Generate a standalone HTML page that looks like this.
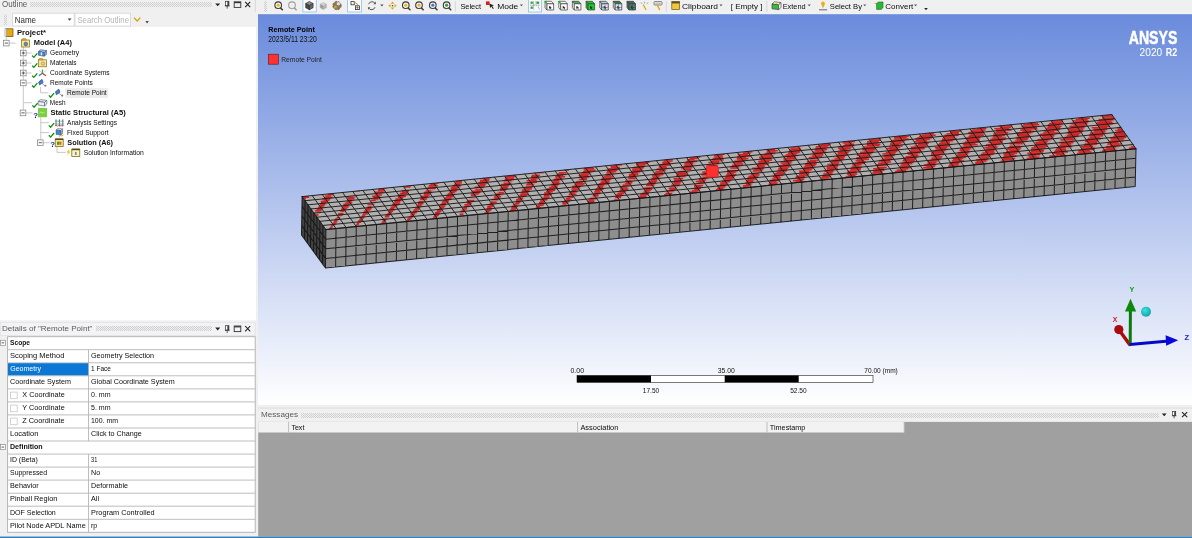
<!DOCTYPE html>
<html><head><meta charset="utf-8"><title>Mechanical</title>
<style>html,body{margin:0;padding:0;background:#f0f0f0;overflow:hidden}svg{display:block;will-change:transform}</style>
</head><body>
<svg width="1192" height="538" viewBox="0 0 1192 538" font-family="Liberation Sans, sans-serif" shape-rendering="auto">
<defs>
<linearGradient id="bg" x1="0" y1="0" x2="0" y2="1"><stop offset="0" stop-color="#6a8bdc"/><stop offset="1" stop-color="#ffffff"/></linearGradient>
<pattern id="dots" width="2" height="2" patternUnits="userSpaceOnUse"><rect width="2" height="2" fill="#f0f0f0"/><rect width="1" height="1" fill="#cfcfcf"/><rect x="1" y="1" width="1" height="1" fill="#cfcfcf"/></pattern>
</defs>
<rect width="1192" height="538" fill="#f0f0f0"/>
<rect x="258" y="14.2" width="934" height="390.8" fill="url(#bg)"/>
<g id="beam">
<polygon points="302.10,196.60 1111.80,114.50 1136.00,148.80 325.90,229.60" fill="#b1b1b1"/>
<polygon points="325.90,229.60 1136.00,148.80 1135.20,186.40 325.50,268.00" fill="#8e8e8e"/>
<polygon points="302.10,196.60 325.90,229.60 325.50,268.00 301.50,235.00" fill="#414141"/>
<clipPath id="topclip"><polygon points="302.10,196.60 1111.80,114.50 1136.00,148.80 325.90,229.60"/></clipPath>
<g clip-path="url(#topclip)">
<polygon points="277.3,234.3 279.7,234.3 306.5,199.9 298.3,199.9" fill="#cd2323" fill-opacity="0.22"/>
<rect x="275.5" y="235.7" width="2.0" height="1.50" fill="#cd2323"/>
<rect x="276.1" y="234.3" width="2.1" height="1.50" fill="#cd2323"/>
<rect x="278.2" y="231.6" width="1.9" height="1.50" fill="#cd2323"/>
<rect x="279.4" y="230.3" width="2.3" height="1.50" fill="#cd2323"/>
<rect x="279.6" y="228.9" width="2.8" height="1.50" fill="#cd2323"/>
<rect x="280.6" y="227.6" width="3.3" height="1.50" fill="#cd2323"/>
<rect x="281.1" y="226.2" width="3.2" height="1.50" fill="#cd2323"/>
<rect x="282.2" y="224.9" width="3.3" height="1.50" fill="#cd2323"/>
<rect x="284.5" y="222.2" width="3.5" height="1.50" fill="#cd2323"/>
<rect x="285.4" y="220.8" width="4.2" height="1.50" fill="#cd2323"/>
<rect x="285.5" y="219.5" width="4.6" height="1.50" fill="#cd2323"/>
<rect x="285.7" y="218.1" width="5.0" height="1.50" fill="#cd2323"/>
<rect x="288.6" y="216.8" width="3.6" height="1.50" fill="#cd2323"/>
<rect x="287.9" y="215.4" width="4.8" height="1.50" fill="#cd2323"/>
<rect x="289.2" y="214.1" width="4.4" height="1.50" fill="#cd2323"/>
<rect x="290.7" y="212.7" width="5.1" height="1.50" fill="#cd2323"/>
<rect x="291.0" y="211.4" width="6.3" height="1.50" fill="#cd2323"/>
<rect x="290.9" y="210.0" width="5.8" height="1.50" fill="#cd2323"/>
<rect x="292.7" y="208.7" width="6.9" height="1.50" fill="#cd2323"/>
<rect x="292.6" y="207.3" width="6.3" height="1.50" fill="#cd2323"/>
<rect x="293.8" y="206.0" width="6.1" height="1.50" fill="#cd2323"/>
<rect x="294.3" y="203.3" width="7.9" height="1.50" fill="#cd2323"/>
<rect x="296.2" y="201.9" width="6.1" height="1.50" fill="#cd2323"/>
<rect x="298.1" y="200.6" width="7.6" height="1.50" fill="#cd2323"/>
<rect x="300.9" y="197.9" width="5.1" height="1.50" fill="#cd2323"/>
<rect x="300.8" y="196.5" width="8.3" height="1.50" fill="#cd2323"/>
<rect x="299.9" y="195.2" width="8.7" height="1.50" fill="#cd2323"/>
<polygon points="303.2,231.7 305.6,231.7 332.5,197.3 324.3,197.3" fill="#cd2323" fill-opacity="0.22"/>
<rect x="302.5" y="231.7" width="1.5" height="1.50" fill="#cd2323"/>
<rect x="303.1" y="230.4" width="2.1" height="1.50" fill="#cd2323"/>
<rect x="305.6" y="227.7" width="2.1" height="1.50" fill="#cd2323"/>
<rect x="306.0" y="226.3" width="2.4" height="1.50" fill="#cd2323"/>
<rect x="306.8" y="225.0" width="3.0" height="1.50" fill="#cd2323"/>
<rect x="308.0" y="223.6" width="3.2" height="1.50" fill="#cd2323"/>
<rect x="308.8" y="222.3" width="3.0" height="1.50" fill="#cd2323"/>
<rect x="310.1" y="220.9" width="3.0" height="1.50" fill="#cd2323"/>
<rect x="309.5" y="219.6" width="3.6" height="1.50" fill="#cd2323"/>
<rect x="310.3" y="218.2" width="3.9" height="1.50" fill="#cd2323"/>
<rect x="311.1" y="216.9" width="4.2" height="1.50" fill="#cd2323"/>
<rect x="313.0" y="215.5" width="4.0" height="1.50" fill="#cd2323"/>
<rect x="313.7" y="214.2" width="4.8" height="1.50" fill="#cd2323"/>
<rect x="315.0" y="210.1" width="6.1" height="1.50" fill="#cd2323"/>
<rect x="316.5" y="208.8" width="5.3" height="1.50" fill="#cd2323"/>
<rect x="317.8" y="207.4" width="4.7" height="1.50" fill="#cd2323"/>
<rect x="318.7" y="206.1" width="4.8" height="1.50" fill="#cd2323"/>
<rect x="320.3" y="204.7" width="4.1" height="1.50" fill="#cd2323"/>
<rect x="320.0" y="203.4" width="5.2" height="1.50" fill="#cd2323"/>
<rect x="320.9" y="202.0" width="5.1" height="1.50" fill="#cd2323"/>
<rect x="320.8" y="200.7" width="6.9" height="1.50" fill="#cd2323"/>
<rect x="323.9" y="199.3" width="5.8" height="1.50" fill="#cd2323"/>
<rect x="322.2" y="198.0" width="7.9" height="1.50" fill="#cd2323"/>
<rect x="325.1" y="196.6" width="7.4" height="1.50" fill="#cd2323"/>
<rect x="325.1" y="195.3" width="5.8" height="1.50" fill="#cd2323"/>
<rect x="327.7" y="193.9" width="5.6" height="1.50" fill="#cd2323"/>
<rect x="327.4" y="192.6" width="5.6" height="1.50" fill="#cd2323"/>
<polygon points="329.2,229.2 331.6,229.2 358.5,194.7 350.3,194.7" fill="#cd2323" fill-opacity="0.22"/>
<rect x="327.6" y="230.5" width="2.2" height="1.50" fill="#cd2323"/>
<rect x="328.5" y="229.2" width="1.6" height="1.50" fill="#cd2323"/>
<rect x="329.4" y="227.8" width="1.8" height="1.50" fill="#cd2323"/>
<rect x="330.2" y="226.5" width="2.2" height="1.50" fill="#cd2323"/>
<rect x="330.9" y="225.1" width="2.0" height="1.50" fill="#cd2323"/>
<rect x="332.1" y="223.8" width="3.2" height="1.50" fill="#cd2323"/>
<rect x="332.8" y="222.4" width="3.5" height="1.50" fill="#cd2323"/>
<rect x="333.7" y="221.1" width="3.4" height="1.50" fill="#cd2323"/>
<rect x="334.2" y="219.7" width="3.2" height="1.50" fill="#cd2323"/>
<rect x="335.0" y="218.4" width="2.9" height="1.50" fill="#cd2323"/>
<rect x="336.7" y="217.0" width="3.2" height="1.50" fill="#cd2323"/>
<rect x="338.2" y="214.3" width="4.4" height="1.50" fill="#cd2323"/>
<rect x="338.3" y="213.0" width="5.1" height="1.50" fill="#cd2323"/>
<rect x="340.4" y="210.3" width="3.7" height="1.50" fill="#cd2323"/>
<rect x="341.0" y="208.9" width="4.8" height="1.50" fill="#cd2323"/>
<rect x="341.6" y="207.6" width="5.2" height="1.50" fill="#cd2323"/>
<rect x="342.3" y="206.2" width="6.2" height="1.50" fill="#cd2323"/>
<rect x="343.4" y="204.9" width="4.9" height="1.50" fill="#cd2323"/>
<rect x="343.4" y="203.5" width="6.5" height="1.50" fill="#cd2323"/>
<rect x="345.3" y="202.2" width="7.0" height="1.50" fill="#cd2323"/>
<rect x="347.3" y="200.8" width="4.3" height="1.50" fill="#cd2323"/>
<rect x="347.4" y="199.5" width="4.5" height="1.50" fill="#cd2323"/>
<rect x="347.7" y="198.1" width="6.4" height="1.50" fill="#cd2323"/>
<rect x="347.1" y="196.8" width="7.5" height="1.50" fill="#cd2323"/>
<rect x="351.6" y="190.0" width="8.2" height="1.50" fill="#cd2323"/>
<polygon points="354.9,226.6 357.8,226.6 384.6,192.1 376.1,192.1" fill="#cd2323" fill-opacity="0.22"/>
<rect x="353.3" y="227.9" width="2.1" height="1.50" fill="#cd2323"/>
<rect x="354.2" y="226.6" width="2.6" height="1.50" fill="#cd2323"/>
<rect x="355.2" y="225.2" width="2.0" height="1.50" fill="#cd2323"/>
<rect x="356.2" y="223.9" width="2.6" height="1.50" fill="#cd2323"/>
<rect x="356.9" y="222.5" width="2.1" height="1.50" fill="#cd2323"/>
<rect x="357.9" y="221.2" width="3.1" height="1.50" fill="#cd2323"/>
<rect x="358.4" y="219.8" width="3.6" height="1.50" fill="#cd2323"/>
<rect x="359.5" y="218.5" width="3.1" height="1.50" fill="#cd2323"/>
<rect x="360.6" y="217.1" width="3.3" height="1.50" fill="#cd2323"/>
<rect x="361.4" y="215.8" width="3.2" height="1.50" fill="#cd2323"/>
<rect x="362.3" y="214.4" width="2.9" height="1.50" fill="#cd2323"/>
<rect x="363.0" y="213.1" width="4.9" height="1.50" fill="#cd2323"/>
<rect x="363.6" y="211.7" width="5.2" height="1.50" fill="#cd2323"/>
<rect x="363.9" y="210.4" width="4.3" height="1.50" fill="#cd2323"/>
<rect x="365.7" y="209.0" width="5.0" height="1.50" fill="#cd2323"/>
<rect x="366.3" y="207.7" width="5.3" height="1.50" fill="#cd2323"/>
<rect x="367.7" y="206.3" width="3.9" height="1.50" fill="#cd2323"/>
<rect x="367.4" y="203.6" width="6.2" height="1.50" fill="#cd2323"/>
<rect x="370.8" y="199.6" width="4.9" height="1.50" fill="#cd2323"/>
<rect x="373.5" y="198.2" width="4.8" height="1.50" fill="#cd2323"/>
<rect x="373.3" y="196.9" width="7.5" height="1.50" fill="#cd2323"/>
<rect x="372.2" y="195.5" width="7.6" height="1.50" fill="#cd2323"/>
<rect x="375.1" y="194.2" width="6.7" height="1.50" fill="#cd2323"/>
<rect x="374.4" y="191.5" width="8.8" height="1.50" fill="#cd2323"/>
<rect x="377.9" y="190.1" width="7.3" height="1.50" fill="#cd2323"/>
<rect x="378.2" y="188.8" width="5.8" height="1.50" fill="#cd2323"/>
<rect x="378.3" y="187.4" width="8.1" height="1.50" fill="#cd2323"/>
<polygon points="380.7,224.0 383.9,224.0 410.7,189.5 401.9,189.5" fill="#cd2323" fill-opacity="0.22"/>
<rect x="379.1" y="225.3" width="2.5" height="1.50" fill="#cd2323"/>
<rect x="380.4" y="224.0" width="2.0" height="1.50" fill="#cd2323"/>
<rect x="381.3" y="222.6" width="2.5" height="1.50" fill="#cd2323"/>
<rect x="382.0" y="221.3" width="3.2" height="1.50" fill="#cd2323"/>
<rect x="382.7" y="219.9" width="3.1" height="1.50" fill="#cd2323"/>
<rect x="382.8" y="218.6" width="3.9" height="1.50" fill="#cd2323"/>
<rect x="384.8" y="215.9" width="4.4" height="1.50" fill="#cd2323"/>
<rect x="385.4" y="214.5" width="4.2" height="1.50" fill="#cd2323"/>
<rect x="387.4" y="213.2" width="3.3" height="1.50" fill="#cd2323"/>
<rect x="388.4" y="211.8" width="3.5" height="1.50" fill="#cd2323"/>
<rect x="389.2" y="210.5" width="3.8" height="1.50" fill="#cd2323"/>
<rect x="389.2" y="209.1" width="5.4" height="1.50" fill="#cd2323"/>
<rect x="389.9" y="207.8" width="4.0" height="1.50" fill="#cd2323"/>
<rect x="390.8" y="206.4" width="4.6" height="1.50" fill="#cd2323"/>
<rect x="392.7" y="205.1" width="4.6" height="1.50" fill="#cd2323"/>
<rect x="392.1" y="203.7" width="6.7" height="1.50" fill="#cd2323"/>
<rect x="394.4" y="202.4" width="5.4" height="1.50" fill="#cd2323"/>
<rect x="394.4" y="201.0" width="5.8" height="1.50" fill="#cd2323"/>
<rect x="394.6" y="199.7" width="7.0" height="1.50" fill="#cd2323"/>
<rect x="395.4" y="198.3" width="7.6" height="1.50" fill="#cd2323"/>
<rect x="398.0" y="197.0" width="5.3" height="1.50" fill="#cd2323"/>
<rect x="397.9" y="195.6" width="8.0" height="1.50" fill="#cd2323"/>
<rect x="398.8" y="194.3" width="5.4" height="1.50" fill="#cd2323"/>
<rect x="400.1" y="192.9" width="7.5" height="1.50" fill="#cd2323"/>
<rect x="401.8" y="191.6" width="6.0" height="1.50" fill="#cd2323"/>
<rect x="402.0" y="190.2" width="6.8" height="1.50" fill="#cd2323"/>
<rect x="404.1" y="186.2" width="6.5" height="1.50" fill="#cd2323"/>
<rect x="403.3" y="184.8" width="8.0" height="1.50" fill="#cd2323"/>
<polygon points="406.5,221.4 410.1,221.4 436.8,186.9 427.8,186.9" fill="#cd2323" fill-opacity="0.22"/>
<rect x="405.0" y="222.7" width="2.9" height="1.50" fill="#cd2323"/>
<rect x="406.3" y="221.4" width="3.1" height="1.50" fill="#cd2323"/>
<rect x="406.4" y="220.0" width="3.0" height="1.50" fill="#cd2323"/>
<rect x="407.1" y="218.7" width="3.5" height="1.50" fill="#cd2323"/>
<rect x="407.7" y="217.3" width="4.1" height="1.50" fill="#cd2323"/>
<rect x="409.8" y="216.0" width="3.3" height="1.50" fill="#cd2323"/>
<rect x="410.7" y="214.6" width="3.3" height="1.50" fill="#cd2323"/>
<rect x="410.4" y="213.3" width="4.6" height="1.50" fill="#cd2323"/>
<rect x="411.6" y="211.9" width="5.1" height="1.50" fill="#cd2323"/>
<rect x="413.2" y="210.6" width="3.3" height="1.50" fill="#cd2323"/>
<rect x="413.6" y="209.2" width="5.0" height="1.50" fill="#cd2323"/>
<rect x="415.1" y="207.9" width="3.8" height="1.50" fill="#cd2323"/>
<rect x="416.4" y="206.5" width="3.9" height="1.50" fill="#cd2323"/>
<rect x="417.4" y="205.2" width="3.9" height="1.50" fill="#cd2323"/>
<rect x="417.6" y="203.8" width="4.7" height="1.50" fill="#cd2323"/>
<rect x="418.0" y="202.5" width="5.5" height="1.50" fill="#cd2323"/>
<rect x="418.4" y="201.1" width="4.9" height="1.50" fill="#cd2323"/>
<rect x="420.1" y="198.4" width="6.7" height="1.50" fill="#cd2323"/>
<rect x="421.0" y="197.1" width="5.6" height="1.50" fill="#cd2323"/>
<rect x="420.4" y="195.7" width="7.6" height="1.50" fill="#cd2323"/>
<rect x="424.0" y="194.4" width="5.5" height="1.50" fill="#cd2323"/>
<rect x="423.9" y="193.0" width="6.0" height="1.50" fill="#cd2323"/>
<rect x="423.8" y="191.7" width="7.8" height="1.50" fill="#cd2323"/>
<rect x="425.7" y="190.3" width="5.5" height="1.50" fill="#cd2323"/>
<rect x="427.2" y="187.6" width="8.5" height="1.50" fill="#cd2323"/>
<rect x="428.4" y="186.3" width="6.2" height="1.50" fill="#cd2323"/>
<rect x="428.9" y="184.9" width="8.9" height="1.50" fill="#cd2323"/>
<rect x="430.4" y="183.6" width="6.0" height="1.50" fill="#cd2323"/>
<rect x="430.9" y="182.2" width="7.7" height="1.50" fill="#cd2323"/>
<polygon points="432.3,218.8 436.2,218.8 462.9,184.3 453.6,184.3" fill="#cd2323" fill-opacity="0.22"/>
<rect x="431.3" y="220.1" width="2.8" height="1.50" fill="#cd2323"/>
<rect x="432.8" y="217.4" width="4.0" height="1.50" fill="#cd2323"/>
<rect x="433.5" y="216.1" width="3.6" height="1.50" fill="#cd2323"/>
<rect x="434.1" y="214.7" width="4.6" height="1.50" fill="#cd2323"/>
<rect x="434.8" y="213.4" width="4.6" height="1.50" fill="#cd2323"/>
<rect x="435.1" y="212.0" width="4.5" height="1.50" fill="#cd2323"/>
<rect x="436.7" y="210.7" width="4.6" height="1.50" fill="#cd2323"/>
<rect x="437.3" y="209.3" width="4.3" height="1.50" fill="#cd2323"/>
<rect x="439.2" y="208.0" width="3.4" height="1.50" fill="#cd2323"/>
<rect x="439.6" y="206.6" width="4.6" height="1.50" fill="#cd2323"/>
<rect x="439.1" y="205.3" width="6.0" height="1.50" fill="#cd2323"/>
<rect x="440.2" y="203.9" width="5.4" height="1.50" fill="#cd2323"/>
<rect x="441.6" y="202.6" width="4.5" height="1.50" fill="#cd2323"/>
<rect x="441.8" y="201.2" width="6.7" height="1.50" fill="#cd2323"/>
<rect x="442.7" y="199.9" width="6.2" height="1.50" fill="#cd2323"/>
<rect x="445.2" y="198.5" width="6.1" height="1.50" fill="#cd2323"/>
<rect x="444.6" y="197.2" width="6.8" height="1.50" fill="#cd2323"/>
<rect x="446.3" y="195.8" width="7.6" height="1.50" fill="#cd2323"/>
<rect x="446.6" y="194.5" width="7.2" height="1.50" fill="#cd2323"/>
<rect x="447.8" y="193.1" width="4.8" height="1.50" fill="#cd2323"/>
<rect x="449.4" y="191.8" width="5.4" height="1.50" fill="#cd2323"/>
<rect x="449.4" y="190.4" width="7.0" height="1.50" fill="#cd2323"/>
<rect x="450.8" y="189.1" width="6.3" height="1.50" fill="#cd2323"/>
<rect x="450.7" y="187.7" width="6.8" height="1.50" fill="#cd2323"/>
<rect x="451.4" y="186.4" width="8.3" height="1.50" fill="#cd2323"/>
<rect x="453.2" y="185.0" width="7.7" height="1.50" fill="#cd2323"/>
<rect x="454.2" y="183.7" width="5.6" height="1.50" fill="#cd2323"/>
<rect x="455.5" y="182.3" width="6.2" height="1.50" fill="#cd2323"/>
<rect x="455.5" y="181.0" width="6.5" height="1.50" fill="#cd2323"/>
<rect x="456.1" y="179.6" width="6.3" height="1.50" fill="#cd2323"/>
<polygon points="458.1,216.2 462.4,216.2 489.0,181.7 479.4,181.7" fill="#cd2323" fill-opacity="0.22"/>
<rect x="456.9" y="217.5" width="2.9" height="1.50" fill="#cd2323"/>
<rect x="459.7" y="213.5" width="3.6" height="1.50" fill="#cd2323"/>
<rect x="460.4" y="210.8" width="3.9" height="1.50" fill="#cd2323"/>
<rect x="461.6" y="209.4" width="3.6" height="1.50" fill="#cd2323"/>
<rect x="463.3" y="208.1" width="3.6" height="1.50" fill="#cd2323"/>
<rect x="463.3" y="206.7" width="3.7" height="1.50" fill="#cd2323"/>
<rect x="465.2" y="205.4" width="4.2" height="1.50" fill="#cd2323"/>
<rect x="464.3" y="204.0" width="6.2" height="1.50" fill="#cd2323"/>
<rect x="467.0" y="202.7" width="4.5" height="1.50" fill="#cd2323"/>
<rect x="466.4" y="201.3" width="4.9" height="1.50" fill="#cd2323"/>
<rect x="467.3" y="200.0" width="7.0" height="1.50" fill="#cd2323"/>
<rect x="471.0" y="194.6" width="4.6" height="1.50" fill="#cd2323"/>
<rect x="470.7" y="193.2" width="7.8" height="1.50" fill="#cd2323"/>
<rect x="473.7" y="191.9" width="6.5" height="1.50" fill="#cd2323"/>
<rect x="471.8" y="190.5" width="8.4" height="1.50" fill="#cd2323"/>
<rect x="475.5" y="189.2" width="7.4" height="1.50" fill="#cd2323"/>
<rect x="474.6" y="186.5" width="8.7" height="1.50" fill="#cd2323"/>
<rect x="478.0" y="185.1" width="6.8" height="1.50" fill="#cd2323"/>
<rect x="479.4" y="183.8" width="6.2" height="1.50" fill="#cd2323"/>
<rect x="478.3" y="182.4" width="9.3" height="1.50" fill="#cd2323"/>
<rect x="479.8" y="181.1" width="7.4" height="1.50" fill="#cd2323"/>
<rect x="480.0" y="179.7" width="9.3" height="1.50" fill="#cd2323"/>
<rect x="482.9" y="178.4" width="6.5" height="1.50" fill="#cd2323"/>
<rect x="481.7" y="177.0" width="8.9" height="1.50" fill="#cd2323"/>
<polygon points="483.9,213.6 488.6,213.6 515.1,179.1 505.3,179.1" fill="#cd2323" fill-opacity="0.22"/>
<rect x="483.1" y="215.0" width="3.1" height="1.50" fill="#cd2323"/>
<rect x="484.2" y="212.3" width="4.5" height="1.50" fill="#cd2323"/>
<rect x="485.9" y="210.9" width="3.5" height="1.50" fill="#cd2323"/>
<rect x="486.1" y="209.6" width="5.1" height="1.50" fill="#cd2323"/>
<rect x="486.7" y="208.2" width="5.4" height="1.50" fill="#cd2323"/>
<rect x="487.2" y="206.9" width="4.2" height="1.50" fill="#cd2323"/>
<rect x="487.3" y="205.5" width="6.0" height="1.50" fill="#cd2323"/>
<rect x="489.2" y="204.2" width="3.9" height="1.50" fill="#cd2323"/>
<rect x="489.8" y="202.8" width="4.4" height="1.50" fill="#cd2323"/>
<rect x="491.0" y="201.5" width="5.7" height="1.50" fill="#cd2323"/>
<rect x="491.5" y="198.8" width="7.1" height="1.50" fill="#cd2323"/>
<rect x="494.3" y="197.4" width="5.5" height="1.50" fill="#cd2323"/>
<rect x="494.1" y="196.1" width="6.9" height="1.50" fill="#cd2323"/>
<rect x="495.0" y="194.7" width="5.0" height="1.50" fill="#cd2323"/>
<rect x="495.8" y="193.4" width="4.9" height="1.50" fill="#cd2323"/>
<rect x="498.5" y="192.0" width="5.4" height="1.50" fill="#cd2323"/>
<rect x="500.1" y="189.3" width="5.8" height="1.50" fill="#cd2323"/>
<rect x="500.0" y="188.0" width="7.6" height="1.50" fill="#cd2323"/>
<rect x="501.0" y="186.6" width="6.6" height="1.50" fill="#cd2323"/>
<rect x="503.0" y="185.3" width="5.8" height="1.50" fill="#cd2323"/>
<rect x="500.7" y="183.9" width="8.9" height="1.50" fill="#cd2323"/>
<rect x="503.7" y="182.6" width="7.5" height="1.50" fill="#cd2323"/>
<rect x="503.5" y="179.9" width="8.0" height="1.50" fill="#cd2323"/>
<rect x="504.8" y="178.5" width="9.3" height="1.50" fill="#cd2323"/>
<rect x="505.4" y="177.2" width="8.7" height="1.50" fill="#cd2323"/>
<rect x="505.8" y="175.8" width="10.5" height="1.50" fill="#cd2323"/>
<rect x="508.5" y="174.5" width="6.3" height="1.50" fill="#cd2323"/>
<polygon points="509.7,211.0 514.7,211.0 541.2,176.5 531.1,176.5" fill="#cd2323" fill-opacity="0.22"/>
<rect x="508.0" y="212.4" width="5.2" height="1.50" fill="#cd2323"/>
<rect x="508.7" y="211.0" width="5.3" height="1.50" fill="#cd2323"/>
<rect x="509.9" y="209.7" width="4.3" height="1.50" fill="#cd2323"/>
<rect x="511.1" y="208.3" width="5.3" height="1.50" fill="#cd2323"/>
<rect x="511.3" y="207.0" width="5.2" height="1.50" fill="#cd2323"/>
<rect x="511.8" y="205.6" width="5.8" height="1.50" fill="#cd2323"/>
<rect x="513.2" y="204.3" width="4.0" height="1.50" fill="#cd2323"/>
<rect x="514.7" y="202.9" width="4.5" height="1.50" fill="#cd2323"/>
<rect x="516.3" y="201.6" width="3.9" height="1.50" fill="#cd2323"/>
<rect x="515.9" y="200.2" width="5.2" height="1.50" fill="#cd2323"/>
<rect x="516.1" y="198.9" width="6.3" height="1.50" fill="#cd2323"/>
<rect x="517.9" y="197.5" width="5.1" height="1.50" fill="#cd2323"/>
<rect x="519.5" y="194.8" width="7.0" height="1.50" fill="#cd2323"/>
<rect x="520.3" y="193.5" width="7.9" height="1.50" fill="#cd2323"/>
<rect x="521.4" y="192.1" width="5.2" height="1.50" fill="#cd2323"/>
<rect x="522.1" y="190.8" width="6.7" height="1.50" fill="#cd2323"/>
<rect x="521.7" y="189.4" width="8.1" height="1.50" fill="#cd2323"/>
<rect x="523.7" y="188.1" width="8.4" height="1.50" fill="#cd2323"/>
<rect x="525.9" y="186.7" width="6.1" height="1.50" fill="#cd2323"/>
<rect x="526.3" y="184.0" width="7.6" height="1.50" fill="#cd2323"/>
<rect x="527.3" y="182.7" width="5.7" height="1.50" fill="#cd2323"/>
<rect x="529.4" y="181.3" width="7.6" height="1.50" fill="#cd2323"/>
<rect x="526.5" y="180.0" width="10.1" height="1.50" fill="#cd2323"/>
<rect x="530.6" y="178.6" width="5.9" height="1.50" fill="#cd2323"/>
<rect x="531.7" y="177.3" width="6.2" height="1.50" fill="#cd2323"/>
<rect x="531.1" y="175.9" width="7.6" height="1.50" fill="#cd2323"/>
<rect x="531.8" y="174.6" width="8.1" height="1.50" fill="#cd2323"/>
<rect x="534.5" y="171.9" width="9.1" height="1.50" fill="#cd2323"/>
<polygon points="535.5,208.4 540.9,208.4 567.3,174.0 556.9,174.0" fill="#cd2323" fill-opacity="0.22"/>
<rect x="533.2" y="209.8" width="5.3" height="1.50" fill="#cd2323"/>
<rect x="535.1" y="208.4" width="5.1" height="1.50" fill="#cd2323"/>
<rect x="535.6" y="207.1" width="5.3" height="1.50" fill="#cd2323"/>
<rect x="536.4" y="205.7" width="3.8" height="1.50" fill="#cd2323"/>
<rect x="537.8" y="204.4" width="5.9" height="1.50" fill="#cd2323"/>
<rect x="539.0" y="203.0" width="5.5" height="1.50" fill="#cd2323"/>
<rect x="539.0" y="201.7" width="5.5" height="1.50" fill="#cd2323"/>
<rect x="540.1" y="200.3" width="4.4" height="1.50" fill="#cd2323"/>
<rect x="540.4" y="199.0" width="7.0" height="1.50" fill="#cd2323"/>
<rect x="542.0" y="197.6" width="5.2" height="1.50" fill="#cd2323"/>
<rect x="543.8" y="196.3" width="5.7" height="1.50" fill="#cd2323"/>
<rect x="544.0" y="194.9" width="5.4" height="1.50" fill="#cd2323"/>
<rect x="544.6" y="193.6" width="7.4" height="1.50" fill="#cd2323"/>
<rect x="544.1" y="192.2" width="6.7" height="1.50" fill="#cd2323"/>
<rect x="546.1" y="190.9" width="6.7" height="1.50" fill="#cd2323"/>
<rect x="547.6" y="189.5" width="7.5" height="1.50" fill="#cd2323"/>
<rect x="547.2" y="188.2" width="7.5" height="1.50" fill="#cd2323"/>
<rect x="549.1" y="186.8" width="8.6" height="1.50" fill="#cd2323"/>
<rect x="551.3" y="185.5" width="6.0" height="1.50" fill="#cd2323"/>
<rect x="551.5" y="184.1" width="6.9" height="1.50" fill="#cd2323"/>
<rect x="553.0" y="182.8" width="6.5" height="1.50" fill="#cd2323"/>
<rect x="552.3" y="181.4" width="6.9" height="1.50" fill="#cd2323"/>
<rect x="553.1" y="180.1" width="6.2" height="1.50" fill="#cd2323"/>
<rect x="554.0" y="178.7" width="6.1" height="1.50" fill="#cd2323"/>
<rect x="555.8" y="177.4" width="6.3" height="1.50" fill="#cd2323"/>
<rect x="555.2" y="176.0" width="9.9" height="1.50" fill="#cd2323"/>
<rect x="557.0" y="174.7" width="6.2" height="1.50" fill="#cd2323"/>
<rect x="557.6" y="173.3" width="6.6" height="1.50" fill="#cd2323"/>
<rect x="558.9" y="172.0" width="7.6" height="1.50" fill="#cd2323"/>
<rect x="557.9" y="169.3" width="10.9" height="1.50" fill="#cd2323"/>
<polygon points="561.2,205.8 567.0,205.8 593.5,171.4 582.7,171.4" fill="#cd2323" fill-opacity="0.22"/>
<rect x="561.1" y="207.2" width="3.9" height="1.50" fill="#cd2323"/>
<rect x="560.0" y="205.8" width="5.2" height="1.50" fill="#cd2323"/>
<rect x="562.5" y="203.1" width="4.1" height="1.50" fill="#cd2323"/>
<rect x="562.1" y="201.8" width="6.2" height="1.50" fill="#cd2323"/>
<rect x="564.0" y="200.4" width="5.4" height="1.50" fill="#cd2323"/>
<rect x="566.3" y="199.1" width="5.1" height="1.50" fill="#cd2323"/>
<rect x="565.9" y="197.7" width="4.5" height="1.50" fill="#cd2323"/>
<rect x="567.9" y="196.4" width="5.3" height="1.50" fill="#cd2323"/>
<rect x="568.9" y="193.7" width="7.6" height="1.50" fill="#cd2323"/>
<rect x="569.6" y="192.3" width="5.4" height="1.50" fill="#cd2323"/>
<rect x="570.8" y="191.0" width="6.4" height="1.50" fill="#cd2323"/>
<rect x="571.7" y="189.6" width="4.8" height="1.50" fill="#cd2323"/>
<rect x="571.6" y="188.3" width="7.8" height="1.50" fill="#cd2323"/>
<rect x="572.6" y="186.9" width="7.1" height="1.50" fill="#cd2323"/>
<rect x="572.3" y="185.6" width="8.4" height="1.50" fill="#cd2323"/>
<rect x="574.6" y="184.2" width="9.0" height="1.50" fill="#cd2323"/>
<rect x="575.4" y="182.9" width="9.4" height="1.50" fill="#cd2323"/>
<rect x="576.0" y="181.5" width="6.6" height="1.50" fill="#cd2323"/>
<rect x="579.2" y="178.8" width="7.5" height="1.50" fill="#cd2323"/>
<rect x="581.0" y="177.5" width="5.9" height="1.50" fill="#cd2323"/>
<rect x="579.1" y="176.1" width="10.5" height="1.50" fill="#cd2323"/>
<rect x="578.7" y="174.8" width="9.7" height="1.50" fill="#cd2323"/>
<rect x="580.5" y="173.4" width="8.3" height="1.50" fill="#cd2323"/>
<rect x="582.7" y="172.1" width="7.9" height="1.50" fill="#cd2323"/>
<rect x="583.1" y="170.7" width="8.0" height="1.50" fill="#cd2323"/>
<rect x="584.2" y="169.4" width="11.3" height="1.50" fill="#cd2323"/>
<rect x="583.5" y="168.0" width="10.6" height="1.50" fill="#cd2323"/>
<rect x="585.3" y="166.7" width="7.8" height="1.50" fill="#cd2323"/>
<polygon points="587.0,203.2 593.2,203.2 619.6,168.8 608.6,168.8" fill="#cd2323" fill-opacity="0.22"/>
<rect x="585.1" y="204.6" width="5.8" height="1.50" fill="#cd2323"/>
<rect x="587.8" y="203.2" width="4.5" height="1.50" fill="#cd2323"/>
<rect x="587.6" y="201.9" width="5.0" height="1.50" fill="#cd2323"/>
<rect x="587.7" y="200.5" width="6.7" height="1.50" fill="#cd2323"/>
<rect x="588.3" y="199.2" width="5.8" height="1.50" fill="#cd2323"/>
<rect x="590.1" y="197.8" width="6.7" height="1.50" fill="#cd2323"/>
<rect x="593.0" y="195.1" width="5.5" height="1.50" fill="#cd2323"/>
<rect x="593.3" y="193.8" width="5.1" height="1.50" fill="#cd2323"/>
<rect x="594.5" y="192.4" width="6.0" height="1.50" fill="#cd2323"/>
<rect x="594.2" y="191.1" width="5.9" height="1.50" fill="#cd2323"/>
<rect x="595.2" y="189.7" width="6.2" height="1.50" fill="#cd2323"/>
<rect x="595.6" y="188.4" width="8.1" height="1.50" fill="#cd2323"/>
<rect x="597.2" y="187.0" width="5.8" height="1.50" fill="#cd2323"/>
<rect x="597.5" y="185.7" width="5.6" height="1.50" fill="#cd2323"/>
<rect x="597.9" y="184.3" width="6.3" height="1.50" fill="#cd2323"/>
<rect x="598.8" y="183.0" width="9.1" height="1.50" fill="#cd2323"/>
<rect x="600.6" y="181.6" width="8.9" height="1.50" fill="#cd2323"/>
<rect x="601.9" y="180.3" width="7.4" height="1.50" fill="#cd2323"/>
<rect x="601.0" y="178.9" width="9.5" height="1.50" fill="#cd2323"/>
<rect x="601.5" y="177.6" width="9.8" height="1.50" fill="#cd2323"/>
<rect x="603.4" y="176.2" width="9.7" height="1.50" fill="#cd2323"/>
<rect x="605.4" y="174.9" width="6.1" height="1.50" fill="#cd2323"/>
<rect x="606.5" y="172.2" width="7.1" height="1.50" fill="#cd2323"/>
<rect x="607.0" y="170.8" width="8.9" height="1.50" fill="#cd2323"/>
<rect x="607.5" y="169.5" width="9.8" height="1.50" fill="#cd2323"/>
<rect x="608.4" y="168.1" width="11.6" height="1.50" fill="#cd2323"/>
<rect x="610.9" y="166.8" width="8.9" height="1.50" fill="#cd2323"/>
<rect x="610.4" y="165.4" width="6.9" height="1.50" fill="#cd2323"/>
<rect x="613.3" y="164.1" width="8.8" height="1.50" fill="#cd2323"/>
<polygon points="612.8,200.7 619.3,200.7 645.7,166.2 634.4,166.2" fill="#cd2323" fill-opacity="0.22"/>
<rect x="611.6" y="202.0" width="4.9" height="1.50" fill="#cd2323"/>
<rect x="611.3" y="200.7" width="6.6" height="1.50" fill="#cd2323"/>
<rect x="614.3" y="199.3" width="4.2" height="1.50" fill="#cd2323"/>
<rect x="615.2" y="196.6" width="5.8" height="1.50" fill="#cd2323"/>
<rect x="616.3" y="195.3" width="5.0" height="1.50" fill="#cd2323"/>
<rect x="616.3" y="193.9" width="6.2" height="1.50" fill="#cd2323"/>
<rect x="617.4" y="192.6" width="6.8" height="1.50" fill="#cd2323"/>
<rect x="619.8" y="191.2" width="5.6" height="1.50" fill="#cd2323"/>
<rect x="619.6" y="189.9" width="6.6" height="1.50" fill="#cd2323"/>
<rect x="620.7" y="188.5" width="7.7" height="1.50" fill="#cd2323"/>
<rect x="619.9" y="187.2" width="7.7" height="1.50" fill="#cd2323"/>
<rect x="622.4" y="184.5" width="6.4" height="1.50" fill="#cd2323"/>
<rect x="625.1" y="183.1" width="6.2" height="1.50" fill="#cd2323"/>
<rect x="626.4" y="181.8" width="5.9" height="1.50" fill="#cd2323"/>
<rect x="625.2" y="180.4" width="6.4" height="1.50" fill="#cd2323"/>
<rect x="628.3" y="177.7" width="7.4" height="1.50" fill="#cd2323"/>
<rect x="628.7" y="176.4" width="6.1" height="1.50" fill="#cd2323"/>
<rect x="628.9" y="175.0" width="6.8" height="1.50" fill="#cd2323"/>
<rect x="628.8" y="173.7" width="9.3" height="1.50" fill="#cd2323"/>
<rect x="631.0" y="172.3" width="7.2" height="1.50" fill="#cd2323"/>
<rect x="632.6" y="171.0" width="7.5" height="1.50" fill="#cd2323"/>
<rect x="632.2" y="169.6" width="9.8" height="1.50" fill="#cd2323"/>
<rect x="632.2" y="168.3" width="10.3" height="1.50" fill="#cd2323"/>
<rect x="634.1" y="166.9" width="9.7" height="1.50" fill="#cd2323"/>
<rect x="637.0" y="165.6" width="7.0" height="1.50" fill="#cd2323"/>
<rect x="636.1" y="164.2" width="9.3" height="1.50" fill="#cd2323"/>
<rect x="636.3" y="162.9" width="11.5" height="1.50" fill="#cd2323"/>
<rect x="638.4" y="161.5" width="11.1" height="1.50" fill="#cd2323"/>
<polygon points="638.6,198.1 645.5,198.1 671.8,163.6 660.2,163.6" fill="#cd2323" fill-opacity="0.22"/>
<rect x="636.5" y="199.4" width="7.3" height="1.50" fill="#cd2323"/>
<rect x="637.6" y="198.1" width="6.4" height="1.50" fill="#cd2323"/>
<rect x="638.3" y="196.7" width="6.0" height="1.50" fill="#cd2323"/>
<rect x="639.4" y="195.4" width="7.0" height="1.50" fill="#cd2323"/>
<rect x="640.2" y="194.0" width="7.3" height="1.50" fill="#cd2323"/>
<rect x="642.3" y="192.7" width="6.5" height="1.50" fill="#cd2323"/>
<rect x="643.9" y="191.3" width="4.9" height="1.50" fill="#cd2323"/>
<rect x="644.7" y="190.0" width="5.8" height="1.50" fill="#cd2323"/>
<rect x="645.4" y="188.6" width="6.8" height="1.50" fill="#cd2323"/>
<rect x="644.2" y="187.3" width="7.7" height="1.50" fill="#cd2323"/>
<rect x="646.1" y="184.6" width="8.1" height="1.50" fill="#cd2323"/>
<rect x="647.0" y="183.2" width="7.5" height="1.50" fill="#cd2323"/>
<rect x="648.2" y="181.9" width="7.7" height="1.50" fill="#cd2323"/>
<rect x="648.9" y="180.5" width="7.8" height="1.50" fill="#cd2323"/>
<rect x="650.8" y="179.2" width="6.3" height="1.50" fill="#cd2323"/>
<rect x="651.6" y="177.8" width="7.5" height="1.50" fill="#cd2323"/>
<rect x="653.0" y="176.5" width="6.0" height="1.50" fill="#cd2323"/>
<rect x="652.0" y="175.1" width="8.2" height="1.50" fill="#cd2323"/>
<rect x="655.0" y="173.8" width="8.5" height="1.50" fill="#cd2323"/>
<rect x="654.3" y="172.4" width="8.6" height="1.50" fill="#cd2323"/>
<rect x="655.5" y="171.1" width="7.6" height="1.50" fill="#cd2323"/>
<rect x="658.7" y="169.7" width="6.9" height="1.50" fill="#cd2323"/>
<rect x="656.7" y="168.4" width="8.7" height="1.50" fill="#cd2323"/>
<rect x="659.2" y="167.0" width="7.5" height="1.50" fill="#cd2323"/>
<rect x="658.9" y="165.7" width="7.7" height="1.50" fill="#cd2323"/>
<rect x="659.8" y="164.3" width="11.0" height="1.50" fill="#cd2323"/>
<rect x="662.5" y="163.0" width="7.4" height="1.50" fill="#cd2323"/>
<rect x="662.2" y="161.6" width="8.1" height="1.50" fill="#cd2323"/>
<rect x="663.9" y="160.3" width="8.7" height="1.50" fill="#cd2323"/>
<rect x="662.3" y="158.9" width="10.5" height="1.50" fill="#cd2323"/>
<polygon points="664.4,195.5 671.6,195.5 697.9,161.0 686.1,161.0" fill="#cd2323" fill-opacity="0.22"/>
<rect x="664.1" y="196.8" width="5.6" height="1.50" fill="#cd2323"/>
<rect x="664.4" y="195.5" width="6.0" height="1.50" fill="#cd2323"/>
<rect x="664.0" y="194.1" width="7.0" height="1.50" fill="#cd2323"/>
<rect x="665.5" y="192.8" width="6.5" height="1.50" fill="#cd2323"/>
<rect x="666.7" y="190.1" width="7.0" height="1.50" fill="#cd2323"/>
<rect x="669.5" y="188.7" width="6.6" height="1.50" fill="#cd2323"/>
<rect x="668.6" y="187.4" width="7.6" height="1.50" fill="#cd2323"/>
<rect x="671.6" y="184.7" width="8.1" height="1.50" fill="#cd2323"/>
<rect x="673.8" y="183.3" width="5.9" height="1.50" fill="#cd2323"/>
<rect x="673.4" y="182.0" width="7.3" height="1.50" fill="#cd2323"/>
<rect x="674.0" y="180.6" width="7.7" height="1.50" fill="#cd2323"/>
<rect x="674.2" y="179.3" width="6.2" height="1.50" fill="#cd2323"/>
<rect x="673.5" y="177.9" width="9.5" height="1.50" fill="#cd2323"/>
<rect x="676.1" y="175.2" width="9.5" height="1.50" fill="#cd2323"/>
<rect x="677.1" y="173.9" width="10.6" height="1.50" fill="#cd2323"/>
<rect x="676.8" y="172.5" width="9.4" height="1.50" fill="#cd2323"/>
<rect x="678.2" y="171.2" width="9.6" height="1.50" fill="#cd2323"/>
<rect x="683.3" y="168.5" width="8.1" height="1.50" fill="#cd2323"/>
<rect x="681.1" y="167.1" width="10.6" height="1.50" fill="#cd2323"/>
<rect x="683.8" y="165.8" width="8.9" height="1.50" fill="#cd2323"/>
<rect x="684.5" y="164.4" width="7.9" height="1.50" fill="#cd2323"/>
<rect x="684.3" y="163.1" width="8.7" height="1.50" fill="#cd2323"/>
<rect x="686.2" y="161.7" width="7.5" height="1.50" fill="#cd2323"/>
<rect x="686.8" y="160.4" width="10.1" height="1.50" fill="#cd2323"/>
<rect x="687.2" y="159.0" width="7.2" height="1.50" fill="#cd2323"/>
<rect x="689.5" y="157.7" width="8.2" height="1.50" fill="#cd2323"/>
<rect x="689.0" y="156.3" width="11.3" height="1.50" fill="#cd2323"/>
<polygon points="690.2,192.9 697.8,192.9 724.0,158.4 711.9,158.4" fill="#cd2323" fill-opacity="0.22"/>
<rect x="688.6" y="194.2" width="7.2" height="1.50" fill="#cd2323"/>
<rect x="689.3" y="192.9" width="5.6" height="1.50" fill="#cd2323"/>
<rect x="689.9" y="191.5" width="6.3" height="1.50" fill="#cd2323"/>
<rect x="691.8" y="190.2" width="6.8" height="1.50" fill="#cd2323"/>
<rect x="694.4" y="188.8" width="5.2" height="1.50" fill="#cd2323"/>
<rect x="694.8" y="187.5" width="6.3" height="1.50" fill="#cd2323"/>
<rect x="694.2" y="186.1" width="6.9" height="1.50" fill="#cd2323"/>
<rect x="694.1" y="184.8" width="8.8" height="1.50" fill="#cd2323"/>
<rect x="698.4" y="182.1" width="5.3" height="1.50" fill="#cd2323"/>
<rect x="695.7" y="180.7" width="9.2" height="1.50" fill="#cd2323"/>
<rect x="698.9" y="179.4" width="6.8" height="1.50" fill="#cd2323"/>
<rect x="698.9" y="178.0" width="7.0" height="1.50" fill="#cd2323"/>
<rect x="702.5" y="176.7" width="6.1" height="1.50" fill="#cd2323"/>
<rect x="701.6" y="174.0" width="6.8" height="1.50" fill="#cd2323"/>
<rect x="703.6" y="172.6" width="8.6" height="1.50" fill="#cd2323"/>
<rect x="702.2" y="171.3" width="9.2" height="1.50" fill="#cd2323"/>
<rect x="706.0" y="169.9" width="8.8" height="1.50" fill="#cd2323"/>
<rect x="707.3" y="167.2" width="9.9" height="1.50" fill="#cd2323"/>
<rect x="706.9" y="165.9" width="10.3" height="1.50" fill="#cd2323"/>
<rect x="708.5" y="164.5" width="9.1" height="1.50" fill="#cd2323"/>
<rect x="708.4" y="161.8" width="10.9" height="1.50" fill="#cd2323"/>
<rect x="710.9" y="160.5" width="8.4" height="1.50" fill="#cd2323"/>
<rect x="712.5" y="159.1" width="11.3" height="1.50" fill="#cd2323"/>
<rect x="712.7" y="157.8" width="8.4" height="1.50" fill="#cd2323"/>
<rect x="714.4" y="156.4" width="8.6" height="1.50" fill="#cd2323"/>
<rect x="713.9" y="155.1" width="8.6" height="1.50" fill="#cd2323"/>
<rect x="716.1" y="153.7" width="8.3" height="1.50" fill="#cd2323"/>
<polygon points="716.0,190.3 723.9,190.3 750.1,155.8 737.7,155.8" fill="#cd2323" fill-opacity="0.22"/>
<rect x="714.2" y="191.6" width="8.1" height="1.50" fill="#cd2323"/>
<rect x="714.8" y="190.3" width="6.4" height="1.50" fill="#cd2323"/>
<rect x="715.9" y="188.9" width="7.6" height="1.50" fill="#cd2323"/>
<rect x="717.3" y="187.6" width="5.9" height="1.50" fill="#cd2323"/>
<rect x="719.2" y="186.2" width="5.7" height="1.50" fill="#cd2323"/>
<rect x="717.8" y="184.9" width="8.0" height="1.50" fill="#cd2323"/>
<rect x="719.8" y="183.5" width="7.1" height="1.50" fill="#cd2323"/>
<rect x="720.3" y="182.2" width="7.1" height="1.50" fill="#cd2323"/>
<rect x="722.1" y="180.8" width="8.1" height="1.50" fill="#cd2323"/>
<rect x="724.4" y="179.5" width="6.3" height="1.50" fill="#cd2323"/>
<rect x="724.4" y="178.1" width="8.7" height="1.50" fill="#cd2323"/>
<rect x="724.9" y="176.8" width="9.2" height="1.50" fill="#cd2323"/>
<rect x="726.3" y="175.4" width="8.5" height="1.50" fill="#cd2323"/>
<rect x="726.5" y="174.1" width="9.9" height="1.50" fill="#cd2323"/>
<rect x="727.0" y="172.7" width="6.7" height="1.50" fill="#cd2323"/>
<rect x="727.5" y="171.4" width="8.2" height="1.50" fill="#cd2323"/>
<rect x="727.0" y="170.0" width="10.8" height="1.50" fill="#cd2323"/>
<rect x="730.6" y="167.3" width="8.1" height="1.50" fill="#cd2323"/>
<rect x="730.6" y="166.0" width="8.0" height="1.50" fill="#cd2323"/>
<rect x="732.0" y="164.6" width="7.9" height="1.50" fill="#cd2323"/>
<rect x="735.1" y="163.3" width="8.0" height="1.50" fill="#cd2323"/>
<rect x="733.5" y="161.9" width="8.5" height="1.50" fill="#cd2323"/>
<rect x="734.3" y="160.6" width="10.0" height="1.50" fill="#cd2323"/>
<rect x="737.4" y="159.2" width="8.7" height="1.50" fill="#cd2323"/>
<rect x="736.9" y="157.9" width="11.4" height="1.50" fill="#cd2323"/>
<rect x="737.1" y="156.5" width="8.7" height="1.50" fill="#cd2323"/>
<rect x="738.4" y="155.2" width="13.0" height="1.50" fill="#cd2323"/>
<rect x="737.7" y="153.8" width="10.6" height="1.50" fill="#cd2323"/>
<rect x="742.9" y="152.5" width="7.7" height="1.50" fill="#cd2323"/>
<rect x="743.3" y="151.1" width="9.1" height="1.50" fill="#cd2323"/>
<polygon points="741.8,187.7 750.1,187.7 776.2,153.2 763.6,153.2" fill="#cd2323" fill-opacity="0.22"/>
<rect x="739.3" y="189.1" width="8.6" height="1.50" fill="#cd2323"/>
<rect x="743.2" y="187.7" width="5.4" height="1.50" fill="#cd2323"/>
<rect x="743.1" y="186.4" width="6.3" height="1.50" fill="#cd2323"/>
<rect x="742.9" y="185.0" width="6.1" height="1.50" fill="#cd2323"/>
<rect x="746.1" y="183.7" width="5.3" height="1.50" fill="#cd2323"/>
<rect x="745.3" y="182.3" width="6.0" height="1.50" fill="#cd2323"/>
<rect x="746.4" y="181.0" width="6.7" height="1.50" fill="#cd2323"/>
<rect x="746.6" y="179.6" width="6.9" height="1.50" fill="#cd2323"/>
<rect x="746.9" y="178.3" width="9.0" height="1.50" fill="#cd2323"/>
<rect x="747.5" y="176.9" width="7.9" height="1.50" fill="#cd2323"/>
<rect x="748.5" y="175.6" width="9.7" height="1.50" fill="#cd2323"/>
<rect x="751.2" y="174.2" width="8.3" height="1.50" fill="#cd2323"/>
<rect x="751.1" y="172.9" width="7.7" height="1.50" fill="#cd2323"/>
<rect x="752.9" y="170.2" width="8.6" height="1.50" fill="#cd2323"/>
<rect x="754.5" y="168.8" width="8.7" height="1.50" fill="#cd2323"/>
<rect x="752.2" y="167.5" width="11.4" height="1.50" fill="#cd2323"/>
<rect x="757.2" y="166.1" width="7.4" height="1.50" fill="#cd2323"/>
<rect x="757.5" y="164.8" width="7.1" height="1.50" fill="#cd2323"/>
<rect x="757.5" y="163.4" width="11.2" height="1.50" fill="#cd2323"/>
<rect x="758.8" y="162.1" width="7.1" height="1.50" fill="#cd2323"/>
<rect x="758.1" y="160.7" width="11.0" height="1.50" fill="#cd2323"/>
<rect x="760.7" y="159.4" width="11.4" height="1.50" fill="#cd2323"/>
<rect x="759.8" y="158.0" width="12.0" height="1.50" fill="#cd2323"/>
<rect x="759.0" y="156.7" width="12.3" height="1.50" fill="#cd2323"/>
<rect x="760.7" y="155.3" width="12.1" height="1.50" fill="#cd2323"/>
<rect x="763.6" y="154.0" width="7.6" height="1.50" fill="#cd2323"/>
<rect x="765.5" y="152.6" width="7.8" height="1.50" fill="#cd2323"/>
<rect x="766.7" y="151.3" width="8.9" height="1.50" fill="#cd2323"/>
<rect x="766.6" y="149.9" width="11.2" height="1.50" fill="#cd2323"/>
<rect x="767.2" y="148.6" width="7.7" height="1.50" fill="#cd2323"/>
<polygon points="767.5,185.1 776.2,185.1 802.3,150.6 789.4,150.6" fill="#cd2323" fill-opacity="0.22"/>
<rect x="764.7" y="186.5" width="9.1" height="1.50" fill="#cd2323"/>
<rect x="769.0" y="185.1" width="5.7" height="1.50" fill="#cd2323"/>
<rect x="768.7" y="183.8" width="7.3" height="1.50" fill="#cd2323"/>
<rect x="769.4" y="182.4" width="8.3" height="1.50" fill="#cd2323"/>
<rect x="769.8" y="181.1" width="6.6" height="1.50" fill="#cd2323"/>
<rect x="769.9" y="179.7" width="9.4" height="1.50" fill="#cd2323"/>
<rect x="772.2" y="178.4" width="7.9" height="1.50" fill="#cd2323"/>
<rect x="773.7" y="177.0" width="7.2" height="1.50" fill="#cd2323"/>
<rect x="772.7" y="175.7" width="7.2" height="1.50" fill="#cd2323"/>
<rect x="774.1" y="174.3" width="9.3" height="1.50" fill="#cd2323"/>
<rect x="773.9" y="173.0" width="10.5" height="1.50" fill="#cd2323"/>
<rect x="776.6" y="171.6" width="6.6" height="1.50" fill="#cd2323"/>
<rect x="778.6" y="170.3" width="8.0" height="1.50" fill="#cd2323"/>
<rect x="778.4" y="168.9" width="8.6" height="1.50" fill="#cd2323"/>
<rect x="778.4" y="167.6" width="9.5" height="1.50" fill="#cd2323"/>
<rect x="780.6" y="166.2" width="9.0" height="1.50" fill="#cd2323"/>
<rect x="779.0" y="164.9" width="10.7" height="1.50" fill="#cd2323"/>
<rect x="782.4" y="163.5" width="7.1" height="1.50" fill="#cd2323"/>
<rect x="780.6" y="162.2" width="10.6" height="1.50" fill="#cd2323"/>
<rect x="784.2" y="160.8" width="7.7" height="1.50" fill="#cd2323"/>
<rect x="784.2" y="159.5" width="7.0" height="1.50" fill="#cd2323"/>
<rect x="783.3" y="158.1" width="12.5" height="1.50" fill="#cd2323"/>
<rect x="786.8" y="156.8" width="8.9" height="1.50" fill="#cd2323"/>
<rect x="784.2" y="155.4" width="11.2" height="1.50" fill="#cd2323"/>
<rect x="785.8" y="154.1" width="10.3" height="1.50" fill="#cd2323"/>
<rect x="788.0" y="152.7" width="9.4" height="1.50" fill="#cd2323"/>
<rect x="788.8" y="151.4" width="11.1" height="1.50" fill="#cd2323"/>
<rect x="789.3" y="150.0" width="10.9" height="1.50" fill="#cd2323"/>
<rect x="790.2" y="148.7" width="11.1" height="1.50" fill="#cd2323"/>
<rect x="790.5" y="147.3" width="9.8" height="1.50" fill="#cd2323"/>
<polygon points="793.3,182.5 802.4,182.5 828.4,148.1 815.2,148.1" fill="#cd2323" fill-opacity="0.22"/>
<rect x="794.0" y="183.9" width="5.8" height="1.50" fill="#cd2323"/>
<rect x="794.3" y="182.5" width="6.4" height="1.50" fill="#cd2323"/>
<rect x="795.7" y="181.2" width="5.7" height="1.50" fill="#cd2323"/>
<rect x="792.9" y="179.8" width="9.8" height="1.50" fill="#cd2323"/>
<rect x="797.4" y="178.5" width="6.7" height="1.50" fill="#cd2323"/>
<rect x="795.5" y="177.1" width="8.3" height="1.50" fill="#cd2323"/>
<rect x="795.9" y="175.8" width="9.0" height="1.50" fill="#cd2323"/>
<rect x="798.9" y="174.4" width="9.8" height="1.50" fill="#cd2323"/>
<rect x="800.4" y="173.1" width="8.9" height="1.50" fill="#cd2323"/>
<rect x="799.5" y="171.7" width="7.6" height="1.50" fill="#cd2323"/>
<rect x="799.1" y="170.4" width="10.1" height="1.50" fill="#cd2323"/>
<rect x="803.3" y="169.0" width="8.3" height="1.50" fill="#cd2323"/>
<rect x="803.4" y="167.7" width="9.9" height="1.50" fill="#cd2323"/>
<rect x="803.8" y="166.3" width="7.9" height="1.50" fill="#cd2323"/>
<rect x="805.3" y="165.0" width="10.1" height="1.50" fill="#cd2323"/>
<rect x="804.9" y="163.6" width="11.6" height="1.50" fill="#cd2323"/>
<rect x="807.1" y="162.3" width="9.5" height="1.50" fill="#cd2323"/>
<rect x="807.0" y="160.9" width="8.9" height="1.50" fill="#cd2323"/>
<rect x="810.1" y="159.6" width="8.3" height="1.50" fill="#cd2323"/>
<rect x="808.7" y="156.9" width="9.9" height="1.50" fill="#cd2323"/>
<rect x="812.3" y="155.5" width="10.0" height="1.50" fill="#cd2323"/>
<rect x="812.6" y="154.2" width="10.8" height="1.50" fill="#cd2323"/>
<rect x="814.5" y="152.8" width="8.5" height="1.50" fill="#cd2323"/>
<rect x="812.7" y="151.5" width="13.5" height="1.50" fill="#cd2323"/>
<rect x="815.5" y="150.1" width="9.0" height="1.50" fill="#cd2323"/>
<rect x="814.5" y="148.8" width="12.4" height="1.50" fill="#cd2323"/>
<rect x="815.5" y="147.4" width="10.1" height="1.50" fill="#cd2323"/>
<rect x="815.8" y="146.1" width="12.0" height="1.50" fill="#cd2323"/>
<rect x="818.5" y="144.7" width="10.6" height="1.50" fill="#cd2323"/>
<rect x="821.1" y="143.4" width="9.7" height="1.50" fill="#cd2323"/>
<polygon points="819.1,179.9 828.5,179.9 854.5,145.5 841.1,145.5" fill="#cd2323" fill-opacity="0.22"/>
<rect x="816.9" y="181.3" width="9.0" height="1.50" fill="#cd2323"/>
<rect x="819.3" y="179.9" width="8.9" height="1.50" fill="#cd2323"/>
<rect x="821.1" y="178.6" width="6.6" height="1.50" fill="#cd2323"/>
<rect x="821.3" y="177.2" width="7.4" height="1.50" fill="#cd2323"/>
<rect x="822.0" y="175.9" width="8.8" height="1.50" fill="#cd2323"/>
<rect x="823.6" y="174.5" width="6.5" height="1.50" fill="#cd2323"/>
<rect x="823.3" y="173.2" width="9.1" height="1.50" fill="#cd2323"/>
<rect x="826.3" y="171.8" width="6.3" height="1.50" fill="#cd2323"/>
<rect x="824.4" y="170.5" width="9.1" height="1.50" fill="#cd2323"/>
<rect x="827.0" y="169.1" width="6.9" height="1.50" fill="#cd2323"/>
<rect x="826.7" y="167.8" width="11.1" height="1.50" fill="#cd2323"/>
<rect x="826.7" y="166.4" width="10.4" height="1.50" fill="#cd2323"/>
<rect x="830.6" y="165.1" width="7.5" height="1.50" fill="#cd2323"/>
<rect x="827.4" y="163.7" width="10.7" height="1.50" fill="#cd2323"/>
<rect x="831.9" y="162.4" width="6.9" height="1.50" fill="#cd2323"/>
<rect x="832.2" y="161.0" width="7.2" height="1.50" fill="#cd2323"/>
<rect x="831.1" y="159.7" width="10.4" height="1.50" fill="#cd2323"/>
<rect x="834.7" y="158.3" width="9.1" height="1.50" fill="#cd2323"/>
<rect x="836.7" y="157.0" width="7.6" height="1.50" fill="#cd2323"/>
<rect x="836.4" y="155.6" width="8.7" height="1.50" fill="#cd2323"/>
<rect x="836.8" y="154.3" width="10.5" height="1.50" fill="#cd2323"/>
<rect x="837.8" y="152.9" width="9.5" height="1.50" fill="#cd2323"/>
<rect x="837.6" y="151.6" width="11.0" height="1.50" fill="#cd2323"/>
<rect x="840.3" y="150.2" width="10.1" height="1.50" fill="#cd2323"/>
<rect x="839.4" y="148.9" width="7.8" height="1.50" fill="#cd2323"/>
<rect x="837.9" y="147.5" width="12.7" height="1.50" fill="#cd2323"/>
<rect x="838.7" y="146.2" width="12.7" height="1.50" fill="#cd2323"/>
<rect x="843.4" y="144.8" width="10.9" height="1.50" fill="#cd2323"/>
<rect x="844.7" y="143.5" width="9.4" height="1.50" fill="#cd2323"/>
<rect x="842.6" y="142.1" width="9.5" height="1.50" fill="#cd2323"/>
<rect x="843.5" y="140.8" width="11.6" height="1.50" fill="#cd2323"/>
<polygon points="844.9,177.3 854.7,177.3 880.6,142.9 866.9,142.9" fill="#cd2323" fill-opacity="0.22"/>
<rect x="844.4" y="178.7" width="6.8" height="1.50" fill="#cd2323"/>
<rect x="846.2" y="177.3" width="7.5" height="1.50" fill="#cd2323"/>
<rect x="845.8" y="176.0" width="6.6" height="1.50" fill="#cd2323"/>
<rect x="848.2" y="174.6" width="7.2" height="1.50" fill="#cd2323"/>
<rect x="847.0" y="173.3" width="10.1" height="1.50" fill="#cd2323"/>
<rect x="847.4" y="171.9" width="7.8" height="1.50" fill="#cd2323"/>
<rect x="847.5" y="170.6" width="9.3" height="1.50" fill="#cd2323"/>
<rect x="850.6" y="169.2" width="10.2" height="1.50" fill="#cd2323"/>
<rect x="850.3" y="167.9" width="10.6" height="1.50" fill="#cd2323"/>
<rect x="851.5" y="166.5" width="10.1" height="1.50" fill="#cd2323"/>
<rect x="852.6" y="165.2" width="6.8" height="1.50" fill="#cd2323"/>
<rect x="852.4" y="163.8" width="9.1" height="1.50" fill="#cd2323"/>
<rect x="855.0" y="162.5" width="9.9" height="1.50" fill="#cd2323"/>
<rect x="857.4" y="161.1" width="8.1" height="1.50" fill="#cd2323"/>
<rect x="855.6" y="159.8" width="8.5" height="1.50" fill="#cd2323"/>
<rect x="857.0" y="158.4" width="12.0" height="1.50" fill="#cd2323"/>
<rect x="856.3" y="157.1" width="10.6" height="1.50" fill="#cd2323"/>
<rect x="859.9" y="155.7" width="9.7" height="1.50" fill="#cd2323"/>
<rect x="856.8" y="154.4" width="12.7" height="1.50" fill="#cd2323"/>
<rect x="862.5" y="153.0" width="8.9" height="1.50" fill="#cd2323"/>
<rect x="860.0" y="151.7" width="13.2" height="1.50" fill="#cd2323"/>
<rect x="864.2" y="150.3" width="9.4" height="1.50" fill="#cd2323"/>
<rect x="862.4" y="149.0" width="13.1" height="1.50" fill="#cd2323"/>
<rect x="862.0" y="147.6" width="13.6" height="1.50" fill="#cd2323"/>
<rect x="863.8" y="146.3" width="9.6" height="1.50" fill="#cd2323"/>
<rect x="867.0" y="144.9" width="12.5" height="1.50" fill="#cd2323"/>
<rect x="866.8" y="143.6" width="13.6" height="1.50" fill="#cd2323"/>
<rect x="866.9" y="142.2" width="10.7" height="1.50" fill="#cd2323"/>
<rect x="867.1" y="140.9" width="11.8" height="1.50" fill="#cd2323"/>
<rect x="870.3" y="139.5" width="10.3" height="1.50" fill="#cd2323"/>
<rect x="868.6" y="138.2" width="12.3" height="1.50" fill="#cd2323"/>
<polygon points="870.7,174.8 880.8,174.8 906.8,140.3 892.7,140.3" fill="#cd2323" fill-opacity="0.22"/>
<rect x="868.4" y="176.1" width="9.3" height="1.50" fill="#cd2323"/>
<rect x="869.2" y="174.8" width="10.7" height="1.50" fill="#cd2323"/>
<rect x="872.6" y="173.4" width="9.0" height="1.50" fill="#cd2323"/>
<rect x="872.4" y="172.1" width="9.8" height="1.50" fill="#cd2323"/>
<rect x="873.5" y="170.7" width="8.8" height="1.50" fill="#cd2323"/>
<rect x="875.0" y="169.4" width="9.6" height="1.50" fill="#cd2323"/>
<rect x="873.1" y="168.0" width="10.5" height="1.50" fill="#cd2323"/>
<rect x="877.0" y="166.7" width="9.7" height="1.50" fill="#cd2323"/>
<rect x="876.0" y="164.0" width="11.8" height="1.50" fill="#cd2323"/>
<rect x="878.0" y="162.6" width="10.0" height="1.50" fill="#cd2323"/>
<rect x="880.9" y="161.3" width="10.0" height="1.50" fill="#cd2323"/>
<rect x="878.8" y="159.9" width="11.3" height="1.50" fill="#cd2323"/>
<rect x="881.7" y="158.6" width="10.5" height="1.50" fill="#cd2323"/>
<rect x="884.8" y="157.2" width="7.6" height="1.50" fill="#cd2323"/>
<rect x="883.5" y="155.9" width="8.8" height="1.50" fill="#cd2323"/>
<rect x="885.8" y="154.5" width="8.7" height="1.50" fill="#cd2323"/>
<rect x="882.4" y="153.2" width="12.5" height="1.50" fill="#cd2323"/>
<rect x="885.9" y="151.8" width="9.8" height="1.50" fill="#cd2323"/>
<rect x="887.9" y="150.5" width="9.4" height="1.50" fill="#cd2323"/>
<rect x="889.0" y="149.1" width="9.5" height="1.50" fill="#cd2323"/>
<rect x="886.7" y="147.8" width="11.5" height="1.50" fill="#cd2323"/>
<rect x="889.2" y="146.4" width="10.9" height="1.50" fill="#cd2323"/>
<rect x="892.0" y="145.1" width="10.4" height="1.50" fill="#cd2323"/>
<rect x="889.9" y="143.7" width="9.1" height="1.50" fill="#cd2323"/>
<rect x="890.3" y="142.4" width="10.9" height="1.50" fill="#cd2323"/>
<rect x="890.6" y="141.0" width="12.9" height="1.50" fill="#cd2323"/>
<rect x="892.2" y="139.7" width="12.8" height="1.50" fill="#cd2323"/>
<rect x="894.1" y="138.3" width="14.6" height="1.50" fill="#cd2323"/>
<rect x="894.1" y="137.0" width="12.5" height="1.50" fill="#cd2323"/>
<rect x="896.1" y="135.6" width="12.7" height="1.50" fill="#cd2323"/>
<polygon points="896.5,172.2 907.0,172.2 932.9,137.7 918.6,137.7" fill="#cd2323" fill-opacity="0.22"/>
<rect x="894.0" y="173.5" width="10.0" height="1.50" fill="#cd2323"/>
<rect x="893.8" y="172.2" width="11.1" height="1.50" fill="#cd2323"/>
<rect x="894.9" y="170.8" width="11.1" height="1.50" fill="#cd2323"/>
<rect x="896.7" y="169.5" width="9.3" height="1.50" fill="#cd2323"/>
<rect x="901.5" y="168.1" width="6.5" height="1.50" fill="#cd2323"/>
<rect x="900.2" y="166.8" width="11.3" height="1.50" fill="#cd2323"/>
<rect x="900.0" y="165.4" width="8.8" height="1.50" fill="#cd2323"/>
<rect x="901.4" y="164.1" width="7.3" height="1.50" fill="#cd2323"/>
<rect x="900.8" y="162.7" width="11.4" height="1.50" fill="#cd2323"/>
<rect x="903.8" y="161.4" width="9.4" height="1.50" fill="#cd2323"/>
<rect x="902.6" y="160.0" width="12.2" height="1.50" fill="#cd2323"/>
<rect x="903.3" y="158.7" width="11.9" height="1.50" fill="#cd2323"/>
<rect x="904.5" y="157.3" width="11.9" height="1.50" fill="#cd2323"/>
<rect x="905.6" y="156.0" width="12.0" height="1.50" fill="#cd2323"/>
<rect x="910.4" y="154.6" width="8.0" height="1.50" fill="#cd2323"/>
<rect x="908.0" y="153.3" width="9.5" height="1.50" fill="#cd2323"/>
<rect x="907.2" y="151.9" width="12.7" height="1.50" fill="#cd2323"/>
<rect x="910.2" y="150.6" width="11.4" height="1.50" fill="#cd2323"/>
<rect x="910.5" y="149.2" width="10.2" height="1.50" fill="#cd2323"/>
<rect x="911.3" y="147.9" width="13.3" height="1.50" fill="#cd2323"/>
<rect x="910.7" y="146.5" width="13.6" height="1.50" fill="#cd2323"/>
<rect x="914.9" y="145.2" width="11.9" height="1.50" fill="#cd2323"/>
<rect x="918.0" y="143.8" width="8.8" height="1.50" fill="#cd2323"/>
<rect x="918.2" y="142.5" width="10.4" height="1.50" fill="#cd2323"/>
<rect x="914.1" y="141.1" width="13.2" height="1.50" fill="#cd2323"/>
<rect x="915.8" y="139.8" width="11.0" height="1.50" fill="#cd2323"/>
<rect x="915.1" y="138.4" width="14.6" height="1.50" fill="#cd2323"/>
<rect x="917.2" y="137.1" width="14.6" height="1.50" fill="#cd2323"/>
<rect x="919.0" y="135.7" width="13.8" height="1.50" fill="#cd2323"/>
<rect x="921.4" y="134.4" width="14.3" height="1.50" fill="#cd2323"/>
<rect x="923.9" y="133.0" width="9.9" height="1.50" fill="#cd2323"/>
<polygon points="922.3,169.6 933.1,169.6 959.0,135.1 944.4,135.1" fill="#cd2323" fill-opacity="0.22"/>
<rect x="921.6" y="170.9" width="9.0" height="1.50" fill="#cd2323"/>
<rect x="924.3" y="169.6" width="7.5" height="1.50" fill="#cd2323"/>
<rect x="925.7" y="168.2" width="7.1" height="1.50" fill="#cd2323"/>
<rect x="923.1" y="166.9" width="10.1" height="1.50" fill="#cd2323"/>
<rect x="926.5" y="165.5" width="8.4" height="1.50" fill="#cd2323"/>
<rect x="924.1" y="164.2" width="11.6" height="1.50" fill="#cd2323"/>
<rect x="927.4" y="162.8" width="7.8" height="1.50" fill="#cd2323"/>
<rect x="928.6" y="161.5" width="7.8" height="1.50" fill="#cd2323"/>
<rect x="927.4" y="160.1" width="10.0" height="1.50" fill="#cd2323"/>
<rect x="931.2" y="158.8" width="8.9" height="1.50" fill="#cd2323"/>
<rect x="931.7" y="157.4" width="9.6" height="1.50" fill="#cd2323"/>
<rect x="933.5" y="156.1" width="8.8" height="1.50" fill="#cd2323"/>
<rect x="931.3" y="154.7" width="8.2" height="1.50" fill="#cd2323"/>
<rect x="931.0" y="153.4" width="12.5" height="1.50" fill="#cd2323"/>
<rect x="931.3" y="152.0" width="12.3" height="1.50" fill="#cd2323"/>
<rect x="932.6" y="150.7" width="11.6" height="1.50" fill="#cd2323"/>
<rect x="936.9" y="149.3" width="8.6" height="1.50" fill="#cd2323"/>
<rect x="935.6" y="148.0" width="10.6" height="1.50" fill="#cd2323"/>
<rect x="934.9" y="146.6" width="12.3" height="1.50" fill="#cd2323"/>
<rect x="938.5" y="145.3" width="10.4" height="1.50" fill="#cd2323"/>
<rect x="937.5" y="143.9" width="12.3" height="1.50" fill="#cd2323"/>
<rect x="939.2" y="142.6" width="10.5" height="1.50" fill="#cd2323"/>
<rect x="940.8" y="141.2" width="9.1" height="1.50" fill="#cd2323"/>
<rect x="941.6" y="139.9" width="11.1" height="1.50" fill="#cd2323"/>
<rect x="942.0" y="138.5" width="14.9" height="1.50" fill="#cd2323"/>
<rect x="943.9" y="137.2" width="10.7" height="1.50" fill="#cd2323"/>
<rect x="943.5" y="135.8" width="11.0" height="1.50" fill="#cd2323"/>
<rect x="944.7" y="134.5" width="13.8" height="1.50" fill="#cd2323"/>
<rect x="946.6" y="133.1" width="12.0" height="1.50" fill="#cd2323"/>
<rect x="950.1" y="131.8" width="8.9" height="1.50" fill="#cd2323"/>
<rect x="950.4" y="130.4" width="11.1" height="1.50" fill="#cd2323"/>
<polygon points="948.1,167.0 959.3,167.0 985.1,132.5 970.2,132.5" fill="#cd2323" fill-opacity="0.22"/>
<rect x="946.0" y="168.3" width="8.6" height="1.50" fill="#cd2323"/>
<rect x="947.8" y="167.0" width="9.0" height="1.50" fill="#cd2323"/>
<rect x="948.0" y="165.6" width="9.8" height="1.50" fill="#cd2323"/>
<rect x="949.1" y="164.3" width="9.6" height="1.50" fill="#cd2323"/>
<rect x="949.5" y="162.9" width="9.3" height="1.50" fill="#cd2323"/>
<rect x="952.6" y="161.6" width="7.3" height="1.50" fill="#cd2323"/>
<rect x="951.8" y="160.2" width="12.3" height="1.50" fill="#cd2323"/>
<rect x="953.1" y="158.9" width="8.5" height="1.50" fill="#cd2323"/>
<rect x="952.2" y="157.5" width="10.9" height="1.50" fill="#cd2323"/>
<rect x="955.9" y="156.2" width="9.8" height="1.50" fill="#cd2323"/>
<rect x="956.7" y="154.8" width="9.7" height="1.50" fill="#cd2323"/>
<rect x="957.5" y="153.5" width="10.2" height="1.50" fill="#cd2323"/>
<rect x="957.7" y="152.1" width="10.7" height="1.50" fill="#cd2323"/>
<rect x="960.6" y="150.8" width="9.2" height="1.50" fill="#cd2323"/>
<rect x="959.7" y="149.4" width="8.9" height="1.50" fill="#cd2323"/>
<rect x="960.2" y="148.1" width="10.3" height="1.50" fill="#cd2323"/>
<rect x="962.2" y="146.7" width="9.3" height="1.50" fill="#cd2323"/>
<rect x="963.8" y="145.4" width="8.6" height="1.50" fill="#cd2323"/>
<rect x="963.3" y="144.0" width="14.3" height="1.50" fill="#cd2323"/>
<rect x="962.7" y="142.7" width="12.7" height="1.50" fill="#cd2323"/>
<rect x="965.2" y="141.3" width="14.0" height="1.50" fill="#cd2323"/>
<rect x="967.2" y="140.0" width="12.5" height="1.50" fill="#cd2323"/>
<rect x="966.6" y="138.6" width="12.9" height="1.50" fill="#cd2323"/>
<rect x="965.4" y="137.3" width="14.3" height="1.50" fill="#cd2323"/>
<rect x="968.5" y="135.9" width="12.3" height="1.50" fill="#cd2323"/>
<rect x="969.5" y="134.6" width="14.6" height="1.50" fill="#cd2323"/>
<rect x="970.8" y="133.2" width="12.5" height="1.50" fill="#cd2323"/>
<rect x="968.3" y="131.9" width="14.5" height="1.50" fill="#cd2323"/>
<rect x="970.5" y="130.5" width="13.3" height="1.50" fill="#cd2323"/>
<rect x="972.3" y="129.2" width="13.1" height="1.50" fill="#cd2323"/>
<rect x="976.8" y="127.8" width="9.6" height="1.50" fill="#cd2323"/>
<polygon points="973.8,164.4 985.5,164.4 1011.2,129.9 996.1,129.9" fill="#cd2323" fill-opacity="0.22"/>
<rect x="973.9" y="165.7" width="9.3" height="1.50" fill="#cd2323"/>
<rect x="973.3" y="164.4" width="9.4" height="1.50" fill="#cd2323"/>
<rect x="975.3" y="163.0" width="7.1" height="1.50" fill="#cd2323"/>
<rect x="975.3" y="161.7" width="7.7" height="1.50" fill="#cd2323"/>
<rect x="977.0" y="160.3" width="9.2" height="1.50" fill="#cd2323"/>
<rect x="976.2" y="159.0" width="11.2" height="1.50" fill="#cd2323"/>
<rect x="981.0" y="157.6" width="7.3" height="1.50" fill="#cd2323"/>
<rect x="978.2" y="156.3" width="11.0" height="1.50" fill="#cd2323"/>
<rect x="980.8" y="154.9" width="9.7" height="1.50" fill="#cd2323"/>
<rect x="981.0" y="153.6" width="12.4" height="1.50" fill="#cd2323"/>
<rect x="982.7" y="152.2" width="12.1" height="1.50" fill="#cd2323"/>
<rect x="985.3" y="150.9" width="8.9" height="1.50" fill="#cd2323"/>
<rect x="985.8" y="149.5" width="8.6" height="1.50" fill="#cd2323"/>
<rect x="986.3" y="148.2" width="9.5" height="1.50" fill="#cd2323"/>
<rect x="984.5" y="146.8" width="12.9" height="1.50" fill="#cd2323"/>
<rect x="988.0" y="145.5" width="8.8" height="1.50" fill="#cd2323"/>
<rect x="986.0" y="144.1" width="10.0" height="1.50" fill="#cd2323"/>
<rect x="990.8" y="142.8" width="9.9" height="1.50" fill="#cd2323"/>
<rect x="988.6" y="141.4" width="14.1" height="1.50" fill="#cd2323"/>
<rect x="992.0" y="140.1" width="10.9" height="1.50" fill="#cd2323"/>
<rect x="990.4" y="138.7" width="15.0" height="1.50" fill="#cd2323"/>
<rect x="992.4" y="137.4" width="13.7" height="1.50" fill="#cd2323"/>
<rect x="993.2" y="136.0" width="8.9" height="1.50" fill="#cd2323"/>
<rect x="994.4" y="134.7" width="10.6" height="1.50" fill="#cd2323"/>
<rect x="993.3" y="133.3" width="10.5" height="1.50" fill="#cd2323"/>
<rect x="995.4" y="132.0" width="12.5" height="1.50" fill="#cd2323"/>
<rect x="996.4" y="130.6" width="9.5" height="1.50" fill="#cd2323"/>
<rect x="995.9" y="129.3" width="15.6" height="1.50" fill="#cd2323"/>
<rect x="994.4" y="127.9" width="14.8" height="1.50" fill="#cd2323"/>
<rect x="999.8" y="126.6" width="11.4" height="1.50" fill="#cd2323"/>
<rect x="997.9" y="125.2" width="14.3" height="1.50" fill="#cd2323"/>
<polygon points="999.6,161.8 1011.6,161.8 1037.3,127.3 1021.9,127.3" fill="#cd2323" fill-opacity="0.22"/>
<rect x="1000.2" y="163.2" width="8.6" height="1.50" fill="#cd2323"/>
<rect x="1000.2" y="161.8" width="8.0" height="1.50" fill="#cd2323"/>
<rect x="1001.3" y="160.5" width="9.3" height="1.50" fill="#cd2323"/>
<rect x="1002.2" y="159.1" width="10.9" height="1.50" fill="#cd2323"/>
<rect x="1002.9" y="157.8" width="12.3" height="1.50" fill="#cd2323"/>
<rect x="1003.2" y="156.4" width="7.6" height="1.50" fill="#cd2323"/>
<rect x="1003.9" y="155.1" width="12.6" height="1.50" fill="#cd2323"/>
<rect x="1003.5" y="153.7" width="10.8" height="1.50" fill="#cd2323"/>
<rect x="1003.3" y="152.4" width="13.6" height="1.50" fill="#cd2323"/>
<rect x="1006.3" y="151.0" width="12.9" height="1.50" fill="#cd2323"/>
<rect x="1009.4" y="149.7" width="9.3" height="1.50" fill="#cd2323"/>
<rect x="1007.0" y="148.3" width="13.3" height="1.50" fill="#cd2323"/>
<rect x="1008.0" y="147.0" width="13.1" height="1.50" fill="#cd2323"/>
<rect x="1009.5" y="145.6" width="10.5" height="1.50" fill="#cd2323"/>
<rect x="1009.4" y="142.9" width="13.1" height="1.50" fill="#cd2323"/>
<rect x="1012.4" y="141.6" width="10.4" height="1.50" fill="#cd2323"/>
<rect x="1015.2" y="140.2" width="9.7" height="1.50" fill="#cd2323"/>
<rect x="1016.7" y="138.9" width="10.8" height="1.50" fill="#cd2323"/>
<rect x="1016.3" y="137.5" width="12.0" height="1.50" fill="#cd2323"/>
<rect x="1019.5" y="136.2" width="9.9" height="1.50" fill="#cd2323"/>
<rect x="1017.2" y="134.8" width="12.5" height="1.50" fill="#cd2323"/>
<rect x="1017.1" y="133.5" width="10.9" height="1.50" fill="#cd2323"/>
<rect x="1016.0" y="132.1" width="15.2" height="1.50" fill="#cd2323"/>
<rect x="1022.6" y="130.8" width="11.6" height="1.50" fill="#cd2323"/>
<rect x="1020.4" y="129.4" width="11.0" height="1.50" fill="#cd2323"/>
<rect x="1021.4" y="128.1" width="16.1" height="1.50" fill="#cd2323"/>
<rect x="1023.8" y="126.7" width="13.1" height="1.50" fill="#cd2323"/>
<rect x="1021.4" y="125.4" width="15.2" height="1.50" fill="#cd2323"/>
<rect x="1023.2" y="124.0" width="16.1" height="1.50" fill="#cd2323"/>
<rect x="1027.3" y="122.7" width="10.6" height="1.50" fill="#cd2323"/>
<polygon points="1025.4,159.2 1037.8,159.2 1063.4,124.7 1047.7,124.7" fill="#cd2323" fill-opacity="0.22"/>
<rect x="1023.9" y="160.6" width="12.7" height="1.50" fill="#cd2323"/>
<rect x="1026.6" y="159.2" width="8.3" height="1.50" fill="#cd2323"/>
<rect x="1026.7" y="157.9" width="12.7" height="1.50" fill="#cd2323"/>
<rect x="1029.1" y="156.5" width="10.4" height="1.50" fill="#cd2323"/>
<rect x="1028.3" y="155.2" width="8.0" height="1.50" fill="#cd2323"/>
<rect x="1030.4" y="153.8" width="9.6" height="1.50" fill="#cd2323"/>
<rect x="1027.3" y="152.5" width="12.6" height="1.50" fill="#cd2323"/>
<rect x="1030.7" y="151.1" width="12.6" height="1.50" fill="#cd2323"/>
<rect x="1031.2" y="149.8" width="12.9" height="1.50" fill="#cd2323"/>
<rect x="1031.0" y="148.4" width="11.3" height="1.50" fill="#cd2323"/>
<rect x="1031.5" y="147.1" width="13.9" height="1.50" fill="#cd2323"/>
<rect x="1033.9" y="145.7" width="13.6" height="1.50" fill="#cd2323"/>
<rect x="1035.4" y="144.4" width="11.2" height="1.50" fill="#cd2323"/>
<rect x="1035.8" y="143.0" width="9.6" height="1.50" fill="#cd2323"/>
<rect x="1035.2" y="141.7" width="11.8" height="1.50" fill="#cd2323"/>
<rect x="1038.8" y="140.3" width="9.1" height="1.50" fill="#cd2323"/>
<rect x="1037.4" y="139.0" width="11.7" height="1.50" fill="#cd2323"/>
<rect x="1041.5" y="137.6" width="11.0" height="1.50" fill="#cd2323"/>
<rect x="1042.6" y="136.3" width="10.9" height="1.50" fill="#cd2323"/>
<rect x="1042.0" y="134.9" width="12.3" height="1.50" fill="#cd2323"/>
<rect x="1039.7" y="133.6" width="13.7" height="1.50" fill="#cd2323"/>
<rect x="1043.2" y="132.2" width="15.5" height="1.50" fill="#cd2323"/>
<rect x="1044.4" y="130.9" width="9.9" height="1.50" fill="#cd2323"/>
<rect x="1047.9" y="129.5" width="10.4" height="1.50" fill="#cd2323"/>
<rect x="1046.1" y="128.2" width="14.1" height="1.50" fill="#cd2323"/>
<rect x="1047.3" y="126.8" width="13.0" height="1.50" fill="#cd2323"/>
<rect x="1048.1" y="125.5" width="13.2" height="1.50" fill="#cd2323"/>
<rect x="1047.8" y="124.1" width="11.5" height="1.50" fill="#cd2323"/>
<rect x="1049.0" y="122.8" width="13.8" height="1.50" fill="#cd2323"/>
<rect x="1051.5" y="121.4" width="10.9" height="1.50" fill="#cd2323"/>
<rect x="1052.2" y="120.1" width="10.9" height="1.50" fill="#cd2323"/>
<polygon points="1051.2,156.6 1063.9,156.6 1089.5,122.1 1073.5,122.1" fill="#cd2323" fill-opacity="0.22"/>
<rect x="1051.8" y="158.0" width="9.8" height="1.50" fill="#cd2323"/>
<rect x="1048.9" y="156.6" width="13.4" height="1.50" fill="#cd2323"/>
<rect x="1049.4" y="155.3" width="13.2" height="1.50" fill="#cd2323"/>
<rect x="1056.2" y="153.9" width="8.1" height="1.50" fill="#cd2323"/>
<rect x="1052.7" y="152.6" width="10.4" height="1.50" fill="#cd2323"/>
<rect x="1054.1" y="151.2" width="13.9" height="1.50" fill="#cd2323"/>
<rect x="1054.9" y="149.9" width="11.4" height="1.50" fill="#cd2323"/>
<rect x="1055.9" y="148.5" width="9.9" height="1.50" fill="#cd2323"/>
<rect x="1057.2" y="147.2" width="8.4" height="1.50" fill="#cd2323"/>
<rect x="1058.6" y="145.8" width="13.6" height="1.50" fill="#cd2323"/>
<rect x="1059.7" y="144.5" width="11.1" height="1.50" fill="#cd2323"/>
<rect x="1060.9" y="143.1" width="10.3" height="1.50" fill="#cd2323"/>
<rect x="1059.4" y="141.8" width="13.9" height="1.50" fill="#cd2323"/>
<rect x="1060.3" y="139.1" width="14.4" height="1.50" fill="#cd2323"/>
<rect x="1064.0" y="137.7" width="9.5" height="1.50" fill="#cd2323"/>
<rect x="1065.8" y="136.4" width="9.4" height="1.50" fill="#cd2323"/>
<rect x="1067.0" y="135.0" width="11.4" height="1.50" fill="#cd2323"/>
<rect x="1068.3" y="133.7" width="10.8" height="1.50" fill="#cd2323"/>
<rect x="1067.4" y="132.3" width="13.1" height="1.50" fill="#cd2323"/>
<rect x="1068.2" y="131.0" width="14.2" height="1.50" fill="#cd2323"/>
<rect x="1069.5" y="129.6" width="13.7" height="1.50" fill="#cd2323"/>
<rect x="1067.7" y="128.3" width="15.6" height="1.50" fill="#cd2323"/>
<rect x="1071.1" y="126.9" width="13.4" height="1.50" fill="#cd2323"/>
<rect x="1069.4" y="125.6" width="14.2" height="1.50" fill="#cd2323"/>
<rect x="1073.7" y="124.2" width="12.7" height="1.50" fill="#cd2323"/>
<rect x="1070.5" y="122.9" width="16.8" height="1.50" fill="#cd2323"/>
<rect x="1074.5" y="121.5" width="13.1" height="1.50" fill="#cd2323"/>
<rect x="1072.7" y="120.2" width="16.0" height="1.50" fill="#cd2323"/>
<rect x="1075.7" y="118.8" width="11.9" height="1.50" fill="#cd2323"/>
<rect x="1078.1" y="117.5" width="11.7" height="1.50" fill="#cd2323"/>
<polygon points="1077.0,154.0 1090.1,154.0 1115.6,119.6 1099.4,119.6" fill="#cd2323" fill-opacity="0.22"/>
<rect x="1077.1" y="155.4" width="12.4" height="1.50" fill="#cd2323"/>
<rect x="1078.2" y="154.0" width="10.1" height="1.50" fill="#cd2323"/>
<rect x="1077.0" y="152.7" width="12.3" height="1.50" fill="#cd2323"/>
<rect x="1078.8" y="151.3" width="12.6" height="1.50" fill="#cd2323"/>
<rect x="1077.7" y="150.0" width="12.1" height="1.50" fill="#cd2323"/>
<rect x="1081.3" y="148.6" width="13.7" height="1.50" fill="#cd2323"/>
<rect x="1082.1" y="147.3" width="12.5" height="1.50" fill="#cd2323"/>
<rect x="1080.9" y="145.9" width="12.1" height="1.50" fill="#cd2323"/>
<rect x="1084.0" y="144.6" width="8.5" height="1.50" fill="#cd2323"/>
<rect x="1085.2" y="143.2" width="12.2" height="1.50" fill="#cd2323"/>
<rect x="1087.7" y="141.9" width="9.4" height="1.50" fill="#cd2323"/>
<rect x="1084.9" y="140.5" width="12.8" height="1.50" fill="#cd2323"/>
<rect x="1086.6" y="139.2" width="11.5" height="1.50" fill="#cd2323"/>
<rect x="1087.8" y="137.8" width="13.2" height="1.50" fill="#cd2323"/>
<rect x="1089.8" y="136.5" width="9.9" height="1.50" fill="#cd2323"/>
<rect x="1089.6" y="135.1" width="13.4" height="1.50" fill="#cd2323"/>
<rect x="1089.3" y="133.8" width="14.2" height="1.50" fill="#cd2323"/>
<rect x="1090.1" y="132.4" width="13.6" height="1.50" fill="#cd2323"/>
<rect x="1093.7" y="131.1" width="11.7" height="1.50" fill="#cd2323"/>
<rect x="1094.0" y="129.7" width="11.3" height="1.50" fill="#cd2323"/>
<rect x="1093.5" y="128.4" width="13.5" height="1.50" fill="#cd2323"/>
<rect x="1091.6" y="127.0" width="15.5" height="1.50" fill="#cd2323"/>
<rect x="1099.1" y="125.7" width="10.6" height="1.50" fill="#cd2323"/>
<rect x="1096.8" y="124.3" width="11.1" height="1.50" fill="#cd2323"/>
<rect x="1097.2" y="123.0" width="16.2" height="1.50" fill="#cd2323"/>
<rect x="1096.7" y="121.6" width="15.6" height="1.50" fill="#cd2323"/>
<rect x="1099.1" y="120.3" width="12.3" height="1.50" fill="#cd2323"/>
<rect x="1098.6" y="118.9" width="15.0" height="1.50" fill="#cd2323"/>
<rect x="1102.3" y="117.6" width="14.0" height="1.50" fill="#cd2323"/>
<rect x="1102.7" y="116.2" width="12.9" height="1.50" fill="#cd2323"/>
<rect x="1100.3" y="114.9" width="15.3" height="1.50" fill="#cd2323"/>
<polygon points="1102.8,151.4 1116.2,151.4 1141.7,117.0 1125.2,117.0" fill="#cd2323" fill-opacity="0.22"/>
<rect x="1103.1" y="152.8" width="8.3" height="1.50" fill="#cd2323"/>
<rect x="1103.2" y="151.4" width="11.8" height="1.50" fill="#cd2323"/>
<rect x="1102.1" y="150.1" width="13.2" height="1.50" fill="#cd2323"/>
<rect x="1103.6" y="148.7" width="11.5" height="1.50" fill="#cd2323"/>
<rect x="1106.6" y="147.4" width="8.7" height="1.50" fill="#cd2323"/>
<rect x="1105.9" y="146.0" width="9.9" height="1.50" fill="#cd2323"/>
<rect x="1110.1" y="144.7" width="9.6" height="1.50" fill="#cd2323"/>
<rect x="1107.2" y="143.3" width="14.3" height="1.50" fill="#cd2323"/>
<rect x="1108.2" y="142.0" width="10.2" height="1.50" fill="#cd2323"/>
<rect x="1109.3" y="140.6" width="10.0" height="1.50" fill="#cd2323"/>
<rect x="1111.2" y="139.3" width="12.3" height="1.50" fill="#cd2323"/>
<rect x="1110.1" y="137.9" width="13.7" height="1.50" fill="#cd2323"/>
<rect x="1113.0" y="136.6" width="13.3" height="1.50" fill="#cd2323"/>
<rect x="1114.6" y="135.2" width="10.6" height="1.50" fill="#cd2323"/>
<rect x="1114.2" y="133.9" width="14.5" height="1.50" fill="#cd2323"/>
<rect x="1115.6" y="132.5" width="13.1" height="1.50" fill="#cd2323"/>
<rect x="1117.9" y="131.2" width="12.1" height="1.50" fill="#cd2323"/>
<rect x="1115.2" y="129.8" width="14.4" height="1.50" fill="#cd2323"/>
<rect x="1117.8" y="128.5" width="14.0" height="1.50" fill="#cd2323"/>
<rect x="1117.3" y="127.1" width="11.9" height="1.50" fill="#cd2323"/>
<rect x="1119.9" y="125.8" width="10.7" height="1.50" fill="#cd2323"/>
<rect x="1121.1" y="124.4" width="10.5" height="1.50" fill="#cd2323"/>
<rect x="1123.3" y="123.1" width="10.5" height="1.50" fill="#cd2323"/>
<rect x="1123.8" y="121.7" width="15.0" height="1.50" fill="#cd2323"/>
<rect x="1121.6" y="120.4" width="14.7" height="1.50" fill="#cd2323"/>
<rect x="1125.4" y="119.0" width="13.5" height="1.50" fill="#cd2323"/>
<rect x="1124.7" y="117.7" width="10.8" height="1.50" fill="#cd2323"/>
<rect x="1124.5" y="116.3" width="16.2" height="1.50" fill="#cd2323"/>
<rect x="1130.3" y="115.0" width="10.1" height="1.50" fill="#cd2323"/>
<rect x="1129.3" y="113.6" width="12.8" height="1.50" fill="#cd2323"/>
<rect x="1132.0" y="112.3" width="10.0" height="1.50" fill="#cd2323"/>
<polygon points="1128.6,148.9 1142.4,148.9 1167.8,114.4 1151.0,114.4" fill="#cd2323" fill-opacity="0.22"/>
<rect x="1128.2" y="150.2" width="13.9" height="1.50" fill="#cd2323"/>
<rect x="1126.9" y="148.9" width="12.2" height="1.50" fill="#cd2323"/>
<rect x="1128.8" y="147.5" width="12.5" height="1.50" fill="#cd2323"/>
<rect x="1131.3" y="146.2" width="9.5" height="1.50" fill="#cd2323"/>
<rect x="1133.1" y="144.8" width="11.5" height="1.50" fill="#cd2323"/>
<rect x="1132.1" y="143.5" width="10.2" height="1.50" fill="#cd2323"/>
<rect x="1131.7" y="142.1" width="13.9" height="1.50" fill="#cd2323"/>
<rect x="1133.3" y="140.8" width="13.2" height="1.50" fill="#cd2323"/>
<rect x="1135.8" y="139.4" width="13.4" height="1.50" fill="#cd2323"/>
<rect x="1136.1" y="138.1" width="11.5" height="1.50" fill="#cd2323"/>
<rect x="1135.6" y="136.7" width="15.4" height="1.50" fill="#cd2323"/>
<rect x="1140.8" y="135.4" width="9.4" height="1.50" fill="#cd2323"/>
<rect x="1137.5" y="134.0" width="11.9" height="1.50" fill="#cd2323"/>
<rect x="1137.7" y="132.7" width="14.1" height="1.50" fill="#cd2323"/>
<rect x="1140.3" y="131.3" width="12.8" height="1.50" fill="#cd2323"/>
<rect x="1142.3" y="130.0" width="9.7" height="1.50" fill="#cd2323"/>
<rect x="1140.4" y="128.6" width="12.0" height="1.50" fill="#cd2323"/>
<rect x="1145.4" y="127.3" width="10.8" height="1.50" fill="#cd2323"/>
<rect x="1141.2" y="125.9" width="16.6" height="1.50" fill="#cd2323"/>
<rect x="1146.6" y="124.6" width="9.6" height="1.50" fill="#cd2323"/>
<rect x="1145.5" y="123.2" width="15.4" height="1.50" fill="#cd2323"/>
<rect x="1150.3" y="121.9" width="10.0" height="1.50" fill="#cd2323"/>
<rect x="1147.0" y="120.5" width="11.5" height="1.50" fill="#cd2323"/>
<rect x="1146.9" y="119.2" width="14.8" height="1.50" fill="#cd2323"/>
<rect x="1151.6" y="117.8" width="9.9" height="1.50" fill="#cd2323"/>
<rect x="1150.4" y="116.5" width="10.9" height="1.50" fill="#cd2323"/>
<rect x="1148.5" y="115.1" width="15.5" height="1.50" fill="#cd2323"/>
<rect x="1152.1" y="113.8" width="15.7" height="1.50" fill="#cd2323"/>
<rect x="1150.8" y="112.4" width="17.7" height="1.50" fill="#cd2323"/>
<rect x="1153.6" y="111.1" width="17.8" height="1.50" fill="#cd2323"/>
<rect x="1154.8" y="109.7" width="11.1" height="1.50" fill="#cd2323"/>
<polygon points="1154.5,146.3 1168.3,146.3 1193.8,111.8 1177.0,111.8" fill="#cd2323" fill-opacity="0.22"/>
<rect x="1152.7" y="147.6" width="14.0" height="1.50" fill="#cd2323"/>
<rect x="1155.2" y="146.3" width="10.7" height="1.50" fill="#cd2323"/>
<rect x="1154.6" y="144.9" width="13.0" height="1.50" fill="#cd2323"/>
<rect x="1156.9" y="143.6" width="13.8" height="1.50" fill="#cd2323"/>
<rect x="1158.2" y="142.2" width="9.6" height="1.50" fill="#cd2323"/>
<rect x="1159.1" y="140.9" width="10.9" height="1.50" fill="#cd2323"/>
<rect x="1157.5" y="139.5" width="14.1" height="1.50" fill="#cd2323"/>
<rect x="1157.3" y="138.2" width="14.1" height="1.50" fill="#cd2323"/>
<rect x="1161.0" y="136.8" width="11.6" height="1.50" fill="#cd2323"/>
<rect x="1163.4" y="135.5" width="11.5" height="1.50" fill="#cd2323"/>
<rect x="1162.6" y="134.1" width="15.2" height="1.50" fill="#cd2323"/>
<rect x="1163.9" y="132.8" width="11.5" height="1.50" fill="#cd2323"/>
<rect x="1162.6" y="131.4" width="14.5" height="1.50" fill="#cd2323"/>
<rect x="1163.8" y="130.1" width="13.8" height="1.50" fill="#cd2323"/>
<rect x="1165.2" y="128.7" width="12.3" height="1.50" fill="#cd2323"/>
<rect x="1166.3" y="127.4" width="12.2" height="1.50" fill="#cd2323"/>
<rect x="1168.2" y="126.0" width="15.0" height="1.50" fill="#cd2323"/>
<rect x="1171.9" y="124.7" width="9.5" height="1.50" fill="#cd2323"/>
<rect x="1172.5" y="123.3" width="10.2" height="1.50" fill="#cd2323"/>
<rect x="1171.9" y="122.0" width="11.4" height="1.50" fill="#cd2323"/>
<rect x="1170.9" y="120.6" width="13.4" height="1.50" fill="#cd2323"/>
<rect x="1176.2" y="119.3" width="9.9" height="1.50" fill="#cd2323"/>
<rect x="1175.4" y="117.9" width="11.1" height="1.50" fill="#cd2323"/>
<rect x="1172.8" y="116.6" width="15.5" height="1.50" fill="#cd2323"/>
<rect x="1173.1" y="115.2" width="14.0" height="1.50" fill="#cd2323"/>
<rect x="1173.3" y="113.9" width="15.0" height="1.50" fill="#cd2323"/>
<rect x="1179.0" y="112.5" width="12.1" height="1.50" fill="#cd2323"/>
<rect x="1179.9" y="111.2" width="13.6" height="1.50" fill="#cd2323"/>
<rect x="1179.5" y="109.8" width="12.2" height="1.50" fill="#cd2323"/>
<rect x="1179.9" y="108.5" width="13.9" height="1.50" fill="#cd2323"/>
<rect x="1181.9" y="107.1" width="11.2" height="1.50" fill="#cd2323"/>
</g>
<path d="M302.10 196.60L1111.80 114.50M305.08 200.72L1114.83 118.79M308.05 204.85L1117.85 123.08M311.02 208.97L1120.88 127.36M314.00 213.10L1123.90 131.65M316.98 217.22L1126.92 135.94M319.95 221.35L1129.95 140.23M322.92 225.47L1132.97 144.51M325.90 229.60L1136.00 148.80M302.10 196.60L325.90 229.60M312.22 195.57L336.03 228.59M322.34 194.55L346.15 227.58M332.46 193.52L356.28 226.57M342.59 192.50L366.40 225.56M352.71 191.47L376.53 224.55M362.83 190.44L386.66 223.54M372.95 189.42L396.78 222.53M383.07 188.39L406.91 221.52M393.19 187.36L417.04 220.51M403.31 186.34L427.16 219.50M413.43 185.31L437.29 218.49M423.56 184.28L447.41 217.48M433.68 183.26L457.54 216.47M443.80 182.23L467.67 215.46M453.92 181.21L477.79 214.45M464.04 180.18L487.92 213.44M474.16 179.15L498.05 212.43M484.28 178.13L508.17 211.42M494.40 177.10L518.30 210.41M504.52 176.07L528.42 209.40M514.65 175.05L538.55 208.39M524.77 174.02L548.68 207.38M534.89 173.00L558.80 206.37M545.01 171.97L568.93 205.36M555.13 170.94L579.06 204.35M565.25 169.92L589.18 203.34M575.37 168.89L599.31 202.33M585.50 167.87L609.43 201.32M595.62 166.84L619.56 200.31M605.74 165.81L629.69 199.30M615.86 164.79L639.81 198.29M625.98 163.76L649.94 197.28M636.10 162.73L660.07 196.27M646.22 161.71L670.19 195.26M656.34 160.68L680.32 194.25M666.46 159.66L690.44 193.24M676.59 158.63L700.57 192.23M686.71 157.60L710.70 191.22M696.83 156.58L720.82 190.21M706.95 155.55L730.95 189.20M717.07 154.52L741.08 188.19M727.19 153.50L751.20 187.18M737.31 152.47L761.33 186.17M747.43 151.44L771.46 185.16M757.56 150.42L781.58 184.15M767.68 149.39L791.71 183.14M777.80 148.37L801.83 182.13M787.92 147.34L811.96 181.12M798.04 146.31L822.09 180.11M808.16 145.29L832.21 179.10M818.28 144.26L842.34 178.09M828.40 143.24L852.47 177.08M838.53 142.21L862.59 176.07M848.65 141.18L872.72 175.06M858.77 140.16L882.84 174.05M868.89 139.13L892.97 173.04M879.01 138.10L903.10 172.03M889.13 137.08L913.22 171.02M899.25 136.05L923.35 170.01M909.38 135.03L933.48 169.00M919.50 134.00L943.60 167.99M929.62 132.97L953.73 166.98M939.74 131.95L963.85 165.97M949.86 130.92L973.98 164.96M959.98 129.89L984.11 163.95M970.10 128.87L994.23 162.94M980.22 127.84L1004.36 161.93M990.34 126.81L1014.49 160.92M1000.47 125.79L1024.61 159.91M1010.59 124.76L1034.74 158.90M1020.71 123.74L1044.86 157.89M1030.83 122.71L1054.99 156.88M1040.95 121.68L1065.12 155.87M1051.07 120.66L1075.24 154.86M1061.19 119.63L1085.37 153.85M1071.32 118.61L1095.49 152.84M1081.44 117.58L1105.62 151.83M1091.56 116.55L1115.75 150.82M1101.68 115.53L1125.87 149.81M1111.80 114.50L1136.00 148.80" stroke="#1c1c1c" stroke-width="1.0" fill="none" stroke-linecap="round" stroke-opacity="0.95"/>
<path d="M325.90 229.60L1136.00 148.80M325.80 239.20L1135.80 158.20M325.70 248.80L1135.60 167.60M325.60 258.40L1135.40 177.00M325.50 268.00L1135.20 186.40M325.90 229.60L325.50 268.00M336.03 228.59L335.62 266.98M346.15 227.58L345.74 265.96M356.28 226.57L355.86 264.94M366.40 225.56L365.99 263.92M376.53 224.55L376.11 262.90M386.66 223.54L386.23 261.88M396.78 222.53L396.35 260.86M406.91 221.52L406.47 259.84M417.04 220.51L416.59 258.82M427.16 219.50L426.71 257.80M437.29 218.49L436.83 256.78M447.41 217.48L446.95 255.76M457.54 216.47L457.08 254.74M467.67 215.46L467.20 253.72M477.79 214.45L477.32 252.70M487.92 213.44L487.44 251.68M498.05 212.43L497.56 250.66M508.17 211.42L507.68 249.64M518.30 210.41L517.80 248.62M528.42 209.40L527.92 247.60M538.55 208.39L538.05 246.58M548.68 207.38L548.17 245.56M558.80 206.37L558.29 244.54M568.93 205.36L568.41 243.52M579.06 204.35L578.53 242.50M589.18 203.34L588.65 241.48M599.31 202.33L598.77 240.46M609.43 201.32L608.89 239.44M619.56 200.31L619.02 238.42M629.69 199.30L629.14 237.40M639.81 198.29L639.26 236.38M649.94 197.28L649.38 235.36M660.07 196.27L659.50 234.34M670.19 195.26L669.62 233.32M680.32 194.25L679.74 232.30M690.44 193.24L689.87 231.28M700.57 192.23L699.99 230.26M710.70 191.22L710.11 229.24M720.82 190.21L720.23 228.22M730.95 189.20L730.35 227.20M741.08 188.19L740.47 226.18M751.20 187.18L750.59 225.16M761.33 186.17L760.71 224.14M771.46 185.16L770.84 223.12M781.58 184.15L780.96 222.10M791.71 183.14L791.08 221.08M801.83 182.13L801.20 220.06M811.96 181.12L811.32 219.04M822.09 180.11L821.44 218.02M832.21 179.10L831.56 217.00M842.34 178.09L841.68 215.98M852.47 177.08L851.81 214.96M862.59 176.07L861.93 213.94M872.72 175.06L872.05 212.92M882.84 174.05L882.17 211.90M892.97 173.04L892.29 210.88M903.10 172.03L902.41 209.86M913.22 171.02L912.53 208.84M923.35 170.01L922.65 207.82M933.48 169.00L932.78 206.80M943.60 167.99L942.90 205.78M953.73 166.98L953.02 204.76M963.85 165.97L963.14 203.74M973.98 164.96L973.26 202.72M984.11 163.95L983.38 201.70M994.23 162.94L993.50 200.68M1004.36 161.93L1003.62 199.66M1014.49 160.92L1013.75 198.64M1024.61 159.91L1023.87 197.62M1034.74 158.90L1033.99 196.60M1044.86 157.89L1044.11 195.58M1054.99 156.88L1054.23 194.56M1065.12 155.87L1064.35 193.54M1075.24 154.86L1074.47 192.52M1085.37 153.85L1084.59 191.50M1095.49 152.84L1094.72 190.48M1105.62 151.83L1104.84 189.46M1115.75 150.82L1114.96 188.44M1125.87 149.81L1125.08 187.42M1136.00 148.80L1135.20 186.40M301.95 206.20L325.80 239.20M301.80 215.80L325.70 248.80M301.65 225.40L325.60 258.40M301.50 235.00L325.50 268.00M302.10 196.60L301.50 235.00M305.08 200.72L304.50 239.12M308.05 204.85L307.50 243.25M311.02 208.97L310.50 247.38M314.00 213.10L313.50 251.50M316.98 217.22L316.50 255.62M319.95 221.35L319.50 259.75M322.92 225.47L322.50 263.88M325.90 229.60L325.50 268.00" stroke="#161616" stroke-width="1.02" fill="none" stroke-linecap="round" stroke-opacity="0.92"/>
<path d="M706.4 165.7h9.6a2.4 2.4 0 0 1 2.4 2.4v6.9a2.4 2.4 0 0 1 -2.4 2.4h-9.6z" fill="#ff3030" stroke="#9a1414" stroke-width="0.4"/>
</g>
<text x="268.3" y="31.7" font-size="7.83" font-weight="bold" fill="#000" textLength="46.5" lengthAdjust="spacingAndGlyphs">Remote Point</text>
<text x="268.3" y="42.1" font-size="8.14" fill="#111" textLength="48.5" lengthAdjust="spacingAndGlyphs">2023/5/11 23:20</text>
<rect x="268.3" y="54.2" width="10" height="10" fill="#ff3030" stroke="#5a1a1a" stroke-width="0.6"/>
<text x="281.3" y="62.1" font-size="7.92" fill="#222" textLength="40.5" lengthAdjust="spacingAndGlyphs">Remote Point</text>
<text x="1177.3" y="44.4" font-size="17.5" font-weight="bold" text-anchor="end" fill="#fff" textLength="48.6" lengthAdjust="spacingAndGlyphs" stroke="#fff" stroke-width="0.45">ANSYS</text>
<text x="1162.2" y="55.8" font-size="10.5" text-anchor="end" fill="#fff" textLength="22.6" lengthAdjust="spacingAndGlyphs">2020</text>
<text x="1177.2" y="55.8" font-size="10.5" font-weight="bold" text-anchor="end" fill="#fff" textLength="11.4" lengthAdjust="spacingAndGlyphs">R2</text>
<rect x="577" y="375.5" width="296" height="6.8" fill="#fff" stroke="#222" stroke-width="0.6"/>
<rect x="577" y="375.5" width="74" height="6.8" fill="#000"/>
<rect x="724.7" y="375.5" width="74" height="6.8" fill="#000"/>
<text x="570.5" y="373.3" font-size="7.48" fill="#111" textLength="13.5" lengthAdjust="spacingAndGlyphs">0.00</text>
<text x="717.7" y="373.3" font-size="7.48" fill="#111" textLength="17.0" lengthAdjust="spacingAndGlyphs">35.00</text>
<text x="864.3" y="373.3" font-size="7.48" fill="#111" textLength="33.5" lengthAdjust="spacingAndGlyphs">70.00 (mm)</text>
<text x="651.0" y="392.8" font-size="7.48" text-anchor="middle" fill="#111" textLength="16.5" lengthAdjust="spacingAndGlyphs">17.50</text>
<text x="798.4" y="392.8" font-size="7.48" text-anchor="middle" fill="#111" textLength="16.5" lengthAdjust="spacingAndGlyphs">52.50</text>
<line x1="1129.6" y1="344.4" x2="1119.5" y2="330.5" stroke="#a80c0c" stroke-width="3.4" stroke-linecap="round"/>
<circle cx="1118.8" cy="329.6" r="4.6" fill="#a80c0c"/>
<line x1="1130.1999999999998" y1="344.4" x2="1130.4" y2="310" stroke="#0a7a0a" stroke-width="3"/>
<polygon points="1130.5,298.8 1125,311.6 1136.2,311.6" fill="#0a8a0a"/>
<line x1="1129.6" y1="344.4" x2="1166" y2="341.2" stroke="#0808c8" stroke-width="3"/>
<polygon points="1178.2,340.2 1165.6,335.2 1166.2,345.8" fill="#0808d8"/>
<defs><radialGradient id="sph" cx="0.4" cy="0.35" r="0.7"><stop offset="0" stop-color="#40e0e0"/><stop offset="1" stop-color="#0aa0a8"/></radialGradient></defs>
<circle cx="1146" cy="311.8" r="5" fill="url(#sph)"/>
<text x="1132.0" y="292.4" font-size="7.0" font-weight="bold" text-anchor="middle" fill="#10a010" textLength="4.8" lengthAdjust="spacingAndGlyphs">Y</text>
<text x="1115.0" y="322.2" font-size="7.0" font-weight="bold" text-anchor="middle" fill="#d02020" textLength="4.6" lengthAdjust="spacingAndGlyphs">X</text>
<text x="1186.8" y="339.7" font-size="7.0" font-weight="bold" text-anchor="middle" fill="#2020d0" textLength="4.6" lengthAdjust="spacingAndGlyphs">Z</text>
<text x="2.0" y="6.8" font-size="8.14" fill="#5a5a5a" textLength="25.3" lengthAdjust="spacingAndGlyphs">Outline</text>
<rect x="30" y="2" width="182" height="5" fill="url(#dots)"/>
<polygon points="215.2,3.4 220.2,3.4 217.7,6.2" fill="#222"/>
<g transform="translate(224.9,1.3) scale(1.0)"><rect x="0.7" y="0" width="3.3" height="4.4" fill="#fff" stroke="#333" stroke-width="0.7"/><rect x="2.5" y="0" width="1.5" height="4.4" fill="#333"/><path d="M0 4.6h4.8" stroke="#333" stroke-width="0.8"/><path d="M2.3 4.6v2.7" stroke="#333" stroke-width="0.8"/></g>
<rect x="234.2" y="1.8" width="6.6" height="5.6" fill="none" stroke="#333" stroke-width="0.9"/><line x1="234.2" y1="2.6" x2="240.8" y2="2.6" stroke="#333" stroke-width="1.2"/>
<path d="M245.2 1.8l5 5.4M250.2 1.8l-5 5.4" stroke="#222" stroke-width="1.1"/>
<line x1="255.3" y1="0" x2="255.3" y2="12" stroke="#d8d8d8" stroke-width="1"/>
<rect x="264" y="1" width="3" height="11" fill="url(#dots)"/>
<line x1="280.8" y1="8.2" x2="282.40000000000003" y2="9.8" stroke="#3a3a3a" stroke-width="1.5" stroke-linecap="round"/>
<circle cx="278.20000000000005" cy="5.2" r="3.3" fill="#fafafa" stroke="#3a3a3a" stroke-width="1.1"/>
<circle cx="278.20000000000005" cy="5.2" r="1.6" fill="#e8b820"/>
<line x1="294.59999999999997" y1="8.2" x2="296.2" y2="9.8" stroke="#9a9a9a" stroke-width="1.5" stroke-linecap="round"/>
<circle cx="292.0" cy="5.2" r="3.3" fill="#fafafa" stroke="#9a9a9a" stroke-width="1.1"/>
<circle cx="292.0" cy="5.2" r="1.6" fill="#e8e8e8"/>
<rect x="302.9" y="-1" width="13.4" height="13" fill="#f8fbfe" stroke="#8cc0e8" stroke-width="0.8"/>
<g stroke="#222" stroke-width="0.6" stroke-linejoin="round"><polygon points="309.4,1.3999999999999995 313.096,3.4999999999999996 309.4,5.6 305.70399999999995,3.4999999999999996" fill="#8a8a8a"/><polygon points="305.70399999999995,3.4999999999999996 309.4,5.6 309.4,9.8 305.70399999999995,7.699999999999999" fill="#4a4a4a"/><polygon points="313.096,3.4999999999999996 309.4,5.6 309.4,9.8 313.096,7.699999999999999" fill="#666"/></g>
<g stroke="#aaa" stroke-width="0.4" stroke-linejoin="round"><polygon points="323.3,2.4 326.468,4.2 323.3,6 320.132,4.2" fill="#d0d0d0"/><polygon points="320.132,4.2 323.3,6 323.3,9.6 320.132,7.8" fill="#9a9a9a"/><polygon points="326.468,4.2 323.3,6 323.3,9.6 326.468,7.8" fill="#b4b4b4"/></g>
<circle cx="337" cy="5.6" r="4.2" fill="#8a7a50" stroke="#444" stroke-width="0.6" stroke-dasharray="2.2 1.2"/><circle cx="338.4" cy="3.8" r="1.8" fill="#ddd"/><circle cx="335.4" cy="7" r="1.5" fill="#c9a030"/>
<rect x="347.6" y="-1" width="13.8" height="13" fill="#f8fbfe" stroke="#8cc0e8" stroke-width="0.8"/>
<rect x="351" y="1.6" width="3.2" height="3.2" fill="#fff" stroke="#333" stroke-width="0.8"/><rect x="355.4" y="5.8" width="4" height="3.8" fill="#fff" stroke="#333" stroke-width="0.8"/><path d="M357.4 5.8v3.8M355.4 7.7h4" stroke="#333" stroke-width="0.5"/><path d="M355.2 2.4l2.6 2.4" stroke="#d8a010" stroke-width="1.1"/>
<path d="M368.6 4.2a3.6 3.6 0 0 1 6.6 -0.6 M375 7.2a3.6 3.6 0 0 1 -6.6 0.6" fill="none" stroke="#555" stroke-width="1"/><path d="M375.8 1.6v2.6h-2.4z M368 9.8v-2.6h2.4z" fill="#555"/>
<polygon points="380.2,4.4 383.6,4.4 381.9,6.4" fill="#555"/>
<path d="M392.5 1.6l1.8 2.2h-3.6z M392.5 9.8l1.8-2.2h-3.6z M388.3 5.7l2.2-1.8v3.6z M396.7 5.7l-2.2-1.8v3.6z" fill="#d8a818"/><circle cx="392.5" cy="5.7" r="0.8" fill="#444"/>
<line x1="408.4" y1="8.2" x2="410.0" y2="9.8" stroke="#3a3a3a" stroke-width="1.5" stroke-linecap="round"/>
<circle cx="405.8" cy="5.2" r="3.3" fill="#fafafa" stroke="#3a3a3a" stroke-width="1.1"/>
<circle cx="405.8" cy="5.2" r="1.6" fill="#e8b820"/>
<line x1="421.59999999999997" y1="8.2" x2="423.2" y2="9.8" stroke="#3a3a3a" stroke-width="1.5" stroke-linecap="round"/>
<circle cx="419.0" cy="5.2" r="3.3" fill="#fafafa" stroke="#3a3a3a" stroke-width="1.1"/>
<circle cx="419.0" cy="5.2" r="1.6" fill="#e8b820"/>
<line x1="435.4" y1="8.2" x2="437.0" y2="9.8" stroke="#3a3a3a" stroke-width="1.5" stroke-linecap="round"/>
<circle cx="432.8" cy="5.2" r="3.3" fill="#fafafa" stroke="#3a3a3a" stroke-width="1.1"/>
<circle cx="432.8" cy="5.2" r="1.6" fill="#5078b8"/>
<line x1="449.2" y1="8.2" x2="450.8" y2="9.8" stroke="#3a3a3a" stroke-width="1.5" stroke-linecap="round"/>
<circle cx="446.6" cy="5.2" r="3.3" fill="#fafafa" stroke="#3a3a3a" stroke-width="1.1"/>
<circle cx="446.6" cy="5.2" r="1.6" fill="#38a048"/>
<line x1="455.4" y1="1" x2="455.4" y2="12" stroke="#d8d8d8" stroke-width="1"/>
<text x="460.4" y="8.5" font-size="7.92" fill="#0c0c0c" textLength="20.6" lengthAdjust="spacingAndGlyphs">Select</text>
<rect x="486" y="1.4" width="3.6" height="3.6" fill="#e01818"/><path d="M489.4 3.4l4.6 2-1.8 0.6 1.6 2.4-0.9 0.6-1.6-2.4-1.2 1.3z" fill="#222"/>
<text x="497.2" y="8.5" font-size="7.92" fill="#0c0c0c" textLength="21.1" lengthAdjust="spacingAndGlyphs">Mode</text>
<polygon points="519.8,4.4 523.0,4.4 521.4,6.3" fill="#555"/>
<rect x="528.4" y="-1" width="13.2" height="13" fill="#f8fbfe" stroke="#8cc0e8" stroke-width="0.8"/>
<g fill="#20a030"><rect x="530.6" y="1.6" width="2.2" height="2.2"/><rect x="536.6" y="1.6" width="2.6" height="2.2"/><rect x="530.6" y="6.6" width="2.2" height="2.2"/></g><path d="M533.6 1.4v8.4M530.2 5.2h9.4M536 1.4v3M538 6.6l1.6 3" stroke="#444" stroke-width="0.6" stroke-dasharray="1.2 0.8"/>
<g transform="translate(544.8,0.8) scale(1.0)" stroke="#3a3a3a" stroke-width="0.7" stroke-linejoin="round"><polygon points="0.3,0.5 6.6,0.5 8.8,3 2.2,3" fill="#fff"/><polygon points="0.3,0.5 2.2,3 2.2,9.2 0.3,6.8" fill="#fff"/><rect x="2.2" y="3" width="6.6" height="6.2" fill="#fff"/></g>
<path d="M549.0 6.0l2.8 1.3-1.2 0.4 0.8 1.3-0.6 0.4-0.8-1.3-0.9 0.8z" fill="#222"/>
<g transform="translate(558.5,0.8) scale(1.0)" stroke="#3a3a3a" stroke-width="0.7" stroke-linejoin="round"><polygon points="0.3,0.5 6.6,0.5 8.8,3 2.2,3" fill="#fff"/><polygon points="0.3,0.5 2.2,3 2.2,9.2 0.3,6.8" fill="#fff"/><rect x="2.2" y="3" width="6.6" height="6.2" fill="#fff"/></g>
<path d="M562.7 6.0l2.8 1.3-1.2 0.4 0.8 1.3-0.6 0.4-0.8-1.3-0.9 0.8z" fill="#222"/>
<g transform="translate(572.1,0.8) scale(1.0)" stroke="#3a3a3a" stroke-width="0.7" stroke-linejoin="round"><polygon points="0.3,0.5 6.6,0.5 8.8,3 2.2,3" fill="#30c040"/><polygon points="0.3,0.5 2.2,3 2.2,9.2 0.3,6.8" fill="#fff"/><rect x="2.2" y="3" width="6.6" height="6.2" fill="#fff"/></g>
<path d="M576.3000000000001 6.0l2.8 1.3-1.2 0.4 0.8 1.3-0.6 0.4-0.8-1.3-0.9 0.8z" fill="#222"/>
<g transform="translate(585.8,0.8) scale(1.0)" stroke="#3a3a3a" stroke-width="0.7" stroke-linejoin="round"><polygon points="0.3,0.5 6.6,0.5 8.8,3 2.2,3" fill="#20c830"/><polygon points="0.3,0.5 2.2,3 2.2,9.2 0.3,6.8" fill="#18d028"/><rect x="2.2" y="3" width="6.6" height="6.2" fill="#18d028"/></g>
<path d="M590.0 6.0l2.8 1.3-1.2 0.4 0.8 1.3-0.6 0.4-0.8-1.3-0.9 0.8z" fill="#222"/>
<g transform="translate(599.5,0.8) scale(1.0)" stroke="#3a3a3a" stroke-width="0.7" stroke-linejoin="round"><polygon points="0.3,0.5 6.6,0.5 8.8,3 2.2,3" fill="#b8cce4"/><polygon points="0.3,0.5 2.2,3 2.2,9.2 0.3,6.8" fill="#dce6f2"/><rect x="2.2" y="3" width="6.6" height="6.2" fill="#dce6f2"/></g>
<path d="M603.7 6.0l2.8 1.3-1.2 0.4 0.8 1.3-0.6 0.4-0.8-1.3-0.9 0.8z" fill="#222"/>
<g transform="translate(613,0.8) scale(1.0)" stroke="#3a3a3a" stroke-width="0.7" stroke-linejoin="round"><polygon points="0.3,0.5 6.6,0.5 8.8,3 2.2,3" fill="#2a7a3a"/><polygon points="0.3,0.5 2.2,3 2.2,9.2 0.3,6.8" fill="#dce6f2"/><rect x="2.2" y="3" width="6.6" height="6.2" fill="#dce6f2"/></g>
<path d="M617.2 6.0l2.8 1.3-1.2 0.4 0.8 1.3-0.6 0.4-0.8-1.3-0.9 0.8z" fill="#222"/>
<g transform="translate(626.7,0.8) scale(1.0)" stroke="#3a3a3a" stroke-width="0.7" stroke-linejoin="round"><polygon points="0.3,0.5 6.6,0.5 8.8,3 2.2,3" fill="#3a6a5a"/><polygon points="0.3,0.5 2.2,3 2.2,9.2 0.3,6.8" fill="#4a7a6a"/><rect x="2.2" y="3" width="6.6" height="6.2" fill="#4a7a6a"/></g>
<path d="M630.9000000000001 6.0l2.8 1.3-1.2 0.4 0.8 1.3-0.6 0.4-0.8-1.3-0.9 0.8z" fill="#222"/>
<rect x="544.6" y="0.8" width="2" height="2" fill="#20b830"/>
<path d="M558.8 1.3l2 2.6" stroke="#20b830" stroke-width="1.4"/>
<path d="M605.0 4.3v6.2M601.7 7.4h6.6" stroke="#3a4a6a" stroke-width="0.5"/>
<path d="M618.5 4.3v6.2M615.2 7.4h6.6" stroke="#3a4a6a" stroke-width="0.5"/>
<path d="M632.2 4.3v6.2M628.9000000000001 7.4h6.6" stroke="#3a4a6a" stroke-width="0.5"/>
<path d="M641 2.4l1 1.4M644.6 1.8v1.6M648 2.4l-1 1.4" stroke="#777" stroke-width="0.7"/><path d="M643.4 5l2.4 4.4" stroke="#e0a818" stroke-width="1.3" stroke-linecap="round"/>
<rect x="654" y="1.6" width="8" height="3.4" rx="0.8" fill="#eee" stroke="#555" stroke-width="0.7"/><path d="M655.5 3.3h5" stroke="#555" stroke-width="0.6" stroke-dasharray="1.2 0.7"/><path d="M657.4 5.4l2.2 4.2" stroke="#e0a818" stroke-width="1.3" stroke-linecap="round"/>
<line x1="666.3" y1="1" x2="666.3" y2="12" stroke="#d8d8d8" stroke-width="1"/>
<rect x="671.8" y="1.6" width="7.8" height="8" fill="#f0c838" stroke="#6a5a20" stroke-width="0.7"/><rect x="671.8" y="1.6" width="7.8" height="1.8" fill="#5a4a28"/>
<text x="682.0" y="8.5" font-size="7.92" fill="#0c0c0c" textLength="36.0" lengthAdjust="spacingAndGlyphs">Clipboard</text>
<polygon points="719.4,4.4 722.6,4.4 721.0,6.3" fill="#555"/>
<text x="730.7" y="8.5" font-size="7.92" fill="#0c0c0c" textLength="31.9" lengthAdjust="spacingAndGlyphs">[ Empty ]</text>
<line x1="766.8" y1="1" x2="766.8" y2="12" stroke="#d8d8d8" stroke-width="1"/>
<g stroke="#444" stroke-width="0.7" stroke-linejoin="round"><polygon points="772,4 774.4,1.8 781,2.6 778.6,4.8" fill="#fff"/><polygon points="772,4 778.6,4.8 778.6,9.6 772,8.8" fill="#30c038"/><polygon points="778.6,4.8 781,2.6 781,7.4 778.6,9.6" fill="#fff"/></g><circle cx="776.4" cy="3.2" r="1" fill="#e8c020"/>
<text x="782.7" y="8.5" font-size="7.92" fill="#0c0c0c" textLength="22.9" lengthAdjust="spacingAndGlyphs">Extend</text>
<polygon points="807.6,4.4 810.8,4.4 809.2,6.3" fill="#555"/>
<circle cx="823" cy="3.4" r="1.9" fill="#e8b020"/><path d="M821.4 4.4l1.6 4 1.6-4z" fill="#e8b020"/><path d="M819 9.8h8.2" stroke="#444" stroke-width="0.8"/>
<text x="829.8" y="8.5" font-size="7.92" fill="#0c0c0c" textLength="32.2" lengthAdjust="spacingAndGlyphs">Select By</text>
<polygon points="863.2,4.4 866.4,4.4 864.8,6.3" fill="#555"/>
<path d="M874.6 3.4h2.4" stroke="#e0a010" stroke-width="1"/><g stroke="#1a6a20" stroke-width="0.6" stroke-linejoin="round"><polygon points="876.6,3.6 878.4,2 883,2 883,7.6 881.2,9.4 876.6,9.4" fill="#28b838"/></g>
<text x="885.3" y="8.5" font-size="7.92" fill="#0c0c0c" textLength="28.0" lengthAdjust="spacingAndGlyphs">Convert</text>
<polygon points="914.0,4.4 917.2,4.4 915.6,6.3" fill="#555"/>
<polygon points="924.2,8.0 927.8,8.0 926.0,10.2" fill="#222"/>
<rect x="0" y="13" width="256" height="14" fill="#f0f0f0"/>
<rect x="4" y="14.5" width="3" height="10.5" fill="url(#dots)"/>
<rect x="12.6" y="13.2" width="61.6" height="12.8" fill="#fff" stroke="#d0d4dc" stroke-width="0.8"/>
<text x="14.7" y="22.8" font-size="8.58" fill="#2a2a2a" textLength="21.3" lengthAdjust="spacingAndGlyphs">Name</text>
<polygon points="67.6,18.6 71.6,18.6 69.6,20.8" fill="#444"/>
<rect x="75" y="13.2" width="55.6" height="12.8" fill="#fff" stroke="#d0d4dc" stroke-width="0.8"/>
<text x="77.4" y="22.8" font-size="8.58" fill="#b4b4b4" textLength="51.6" lengthAdjust="spacingAndGlyphs">Search Outline</text>
<path d="M134 17.6l3.2 3.4 3.2-3.4" fill="none" stroke="#d8a010" stroke-width="1.3"/>
<polygon points="145.4,21.2 148.8,21.2 147.1,23.2" fill="#222"/>
<rect x="0" y="27" width="256" height="293.5" fill="#fff"/>
<line x1="6.3" y1="36.6" x2="6.3" y2="40.4" stroke="#c2c2c2" stroke-width="0.9"/>
<line x1="9.1" y1="43.1" x2="15.6" y2="43.1" stroke="#c2c2c2" stroke-width="0.9"/>
<line x1="23.3" y1="47" x2="23.3" y2="110.2" stroke="#c2c2c2" stroke-width="0.9"/>
<line x1="26" y1="53" x2="31.5" y2="53" stroke="#c2c2c2" stroke-width="0.9"/>
<line x1="26" y1="63" x2="31.5" y2="63" stroke="#c2c2c2" stroke-width="0.9"/>
<line x1="26" y1="73" x2="31.5" y2="73" stroke="#c2c2c2" stroke-width="0.9"/>
<line x1="26" y1="82.9" x2="31.5" y2="82.9" stroke="#c2c2c2" stroke-width="0.9"/>
<line x1="23.3" y1="102.7" x2="32" y2="102.7" stroke="#c2c2c2" stroke-width="0.9"/>
<line x1="26" y1="112.9" x2="32.5" y2="112.9" stroke="#c2c2c2" stroke-width="0.9"/>
<line x1="40.6" y1="87" x2="40.6" y2="92.8" stroke="#c2c2c2" stroke-width="0.9"/>
<line x1="40.6" y1="92.8" x2="48.5" y2="92.8" stroke="#c2c2c2" stroke-width="0.9"/>
<line x1="40.8" y1="117.3" x2="40.8" y2="142.5" stroke="#c2c2c2" stroke-width="0.9"/>
<line x1="40.8" y1="122.7" x2="49" y2="122.7" stroke="#c2c2c2" stroke-width="0.9"/>
<line x1="40.8" y1="132.6" x2="49" y2="132.6" stroke="#c2c2c2" stroke-width="0.9"/>
<line x1="43" y1="142.7" x2="49.5" y2="142.7" stroke="#c2c2c2" stroke-width="0.9"/>
<line x1="57" y1="147" x2="57" y2="152.4" stroke="#c2c2c2" stroke-width="0.9"/>
<line x1="57" y1="152.4" x2="65.8" y2="152.4" stroke="#c2c2c2" stroke-width="0.9"/>
<rect x="3.5" y="40.300000000000004" width="5.6" height="5.6" fill="#fff" stroke="#8a8a8a" stroke-width="0.8"/>
<line x1="4.699999999999999" y1="43.1" x2="7.9" y2="43.1" stroke="#333" stroke-width="0.8"/>
<rect x="20.5" y="50.2" width="5.6" height="5.6" fill="#fff" stroke="#8a8a8a" stroke-width="0.8"/>
<line x1="21.7" y1="53" x2="24.900000000000002" y2="53" stroke="#333" stroke-width="0.8"/>
<line x1="23.3" y1="51.4" x2="23.3" y2="54.6" stroke="#333" stroke-width="0.8"/>
<rect x="20.5" y="60.2" width="5.6" height="5.6" fill="#fff" stroke="#8a8a8a" stroke-width="0.8"/>
<line x1="21.7" y1="63" x2="24.900000000000002" y2="63" stroke="#333" stroke-width="0.8"/>
<line x1="23.3" y1="61.4" x2="23.3" y2="64.6" stroke="#333" stroke-width="0.8"/>
<rect x="20.5" y="70.2" width="5.6" height="5.6" fill="#fff" stroke="#8a8a8a" stroke-width="0.8"/>
<line x1="21.7" y1="73" x2="24.900000000000002" y2="73" stroke="#333" stroke-width="0.8"/>
<line x1="23.3" y1="71.4" x2="23.3" y2="74.6" stroke="#333" stroke-width="0.8"/>
<rect x="20.5" y="80.10000000000001" width="5.6" height="5.6" fill="#fff" stroke="#8a8a8a" stroke-width="0.8"/>
<line x1="21.7" y1="82.9" x2="24.900000000000002" y2="82.9" stroke="#333" stroke-width="0.8"/>
<rect x="20.2" y="110.10000000000001" width="5.6" height="5.6" fill="#fff" stroke="#8a8a8a" stroke-width="0.8"/>
<line x1="21.4" y1="112.9" x2="24.6" y2="112.9" stroke="#333" stroke-width="0.8"/>
<rect x="37.5" y="139.89999999999998" width="5.6" height="5.6" fill="#fff" stroke="#8a8a8a" stroke-width="0.8"/>
<line x1="38.699999999999996" y1="142.7" x2="41.9" y2="142.7" stroke="#333" stroke-width="0.8"/>
<rect x="6.4" y="28.8" width="6.6" height="7.8" fill="#e8a810" stroke="#6a4a08" stroke-width="0.7"/><rect x="5" y="28.8" width="1.8" height="7.8" fill="#fff" stroke="#666" stroke-width="0.5"/>
<text x="16.9" y="35.4" font-size="7.83" font-weight="bold" fill="#111" textLength="29.1" lengthAdjust="spacingAndGlyphs">Project*</text>
<rect x="21.6" y="40" width="8" height="7" fill="#f8e890" stroke="#8a6a18" stroke-width="0.7"/><path d="M21.6 40l1-1.4h3l0.8 1.4z" fill="#e8c040" stroke="#8a6a18" stroke-width="0.5"/><circle cx="25.8" cy="44" r="1.9" fill="#5a8ad0" stroke="#345" stroke-width="0.4"/>
<text x="33.7" y="45.4" font-size="7.83" font-weight="bold" fill="#111" textLength="38.2" lengthAdjust="spacingAndGlyphs">Model (A4)</text>
<path d="M32.1 55.6l1.7 1.8 3.5-4.1" fill="none" stroke="#0f8c0f" stroke-width="1.3"/>
<g stroke="#2a4a7a" stroke-width="0.6"><polygon points="38.4,51.6 40.6,49.8 46.4,50.6 44.4,52.6" fill="#a8c8f0"/><polygon points="38.4,51.6 44.4,52.6 44.4,56.2 38.4,55.2" fill="#5a90d8"/><polygon points="44.4,52.6 46.4,50.6 46.4,54.2 44.4,56.2" fill="#88b0e8"/><polygon points="40.4,51.9 42.4,52.2 42.4,55.8 40.4,55.5" fill="#f4f8ff" stroke-width="0.4"/></g>
<text x="50.0" y="55.3" font-size="8.03" fill="#0c0c0c" textLength="29.0" lengthAdjust="spacingAndGlyphs">Geometry</text>
<path d="M32.1 65.6l1.7 1.8 3.5-4.1" fill="none" stroke="#0f8c0f" stroke-width="1.3"/>
<rect x="38.4" y="59.8" width="8" height="7" fill="#f8e890" stroke="#8a6a18" stroke-width="0.7"/><path d="M38.4 59.8l1-1.4h3l0.8 1.4z" fill="#e8c040" stroke="#8a6a18" stroke-width="0.5"/><circle cx="43" cy="63.6" r="1.7" fill="#f0d0a0" stroke="#864" stroke-width="0.5"/>
<text x="50.0" y="65.3" font-size="8.03" fill="#0c0c0c" textLength="26.5" lengthAdjust="spacingAndGlyphs">Materials</text>
<path d="M32.1 75.60000000000001l1.7 1.8 3.5-4.1" fill="none" stroke="#0f8c0f" stroke-width="1.3"/>
<path d="M42.4 73.2l-3.6 2.6" stroke="#3070d0" stroke-width="1.1"/><path d="M42.4 73.2l3.6 2.6" stroke="#d02020" stroke-width="1.1"/><path d="M42.4 73.2v-3.6" stroke="#20b020" stroke-width="1.1"/><path d="M39 70.4l6.8 5.4M45.8 70.4l-6.8 5.4" stroke="#888" stroke-width="0.4"/>
<text x="50.0" y="75.3" font-size="8.03" fill="#0c0c0c" textLength="59.7" lengthAdjust="spacingAndGlyphs">Coordinate Systems</text>
<path d="M32.1 85.5l1.7 1.8 3.5-4.1" fill="none" stroke="#0f8c0f" stroke-width="1.3"/>
<path d="M42.0 83.4l3 2.4" stroke="#888" stroke-width="0.7"/><polygon points="38.6,82 42.0,79.3 43.199999999999996,82.4 39.6,85" fill="#3f7fd6" stroke="#2a3f78" stroke-width="0.6"/><circle cx="45.4" cy="85.8" r="1.05" fill="#7a7a7a"/>
<text x="50.0" y="85.2" font-size="8.03" fill="#0c0c0c" textLength="42.7" lengthAdjust="spacingAndGlyphs">Remote Points</text>
<rect x="65.4" y="88.2" width="42.8" height="9.6" fill="#ececec"/>
<path d="M48.900000000000006 95.4l1.7 1.8 3.5-4.1" fill="none" stroke="#0f8c0f" stroke-width="1.3"/>
<path d="M58.800000000000004 93.2l3 2.4" stroke="#888" stroke-width="0.7"/><polygon points="55.400000000000006,91.8 58.800000000000004,89.1 60.0,92.2 56.400000000000006,94.8" fill="#3f7fd6" stroke="#2a3f78" stroke-width="0.6"/><circle cx="62.2" cy="95.6" r="1.05" fill="#7a7a7a"/>
<text x="67.0" y="95.2" font-size="8.03" fill="#0c0c0c" textLength="39.6" lengthAdjust="spacingAndGlyphs">Remote Point</text>
<path d="M32.400000000000006 105.4l1.7 1.8 3.5-4.1" fill="none" stroke="#0f8c0f" stroke-width="1.3"/>
<g stroke="#4a5a6a" stroke-width="0.6" fill="#e8f0f8"><polygon points="38.2,101.4 40.6,99.6 46.8,100.4 44.6,102.4"/><polygon points="38.2,101.4 44.6,102.4 44.6,106 38.2,105"/><polygon points="44.6,102.4 46.8,100.4 46.8,104 44.6,106"/></g>
<text x="49.8" y="105.2" font-size="8.03" fill="#0c0c0c" textLength="15.7" lengthAdjust="spacingAndGlyphs">Mesh</text>
<text x="33.2" y="117.5" font-size="7.83" font-weight="bold" fill="#1a2a8a">?</text>
<rect x="38" y="108" width="9" height="9.2" fill="#7ad040"/><path d="M39.6 113.4l1.2-1.6 1.2 1.6 1.2-1.6 1.2 1.6" stroke="#d8f8c0" stroke-width="0.6" fill="none"/>
<text x="50.4" y="115.0" font-size="7.83" font-weight="bold" fill="#111" textLength="75.3" lengthAdjust="spacingAndGlyphs">Static Structural (A5)</text>
<path d="M48.900000000000006 125.4l1.7 1.8 3.5-4.1" fill="none" stroke="#0f8c0f" stroke-width="1.3"/>
<path d="M56 119.4v6.6M59.4 119.4v6.6M62.8 119.4v6.6" stroke="#2a3a9a" stroke-width="0.8"/><path d="M55.4 121.2h8M55.4 124h8" stroke="#3a9a3a" stroke-width="0.6"/><path d="M55 126.4l1.2-1.4 1.2 1.4 1.2-1.4 1.2 1.4 1.2-1.4 1.2 1.4 1.2-1.4" stroke="#d02020" stroke-width="0.6" fill="none"/>
<text x="67.0" y="125.3" font-size="8.03" fill="#0c0c0c" textLength="50.0" lengthAdjust="spacingAndGlyphs">Analysis Settings</text>
<path d="M48.900000000000006 135.29999999999998l1.7 1.8 3.5-4.1" fill="none" stroke="#0f8c0f" stroke-width="1.3"/>
<g stroke="#556" stroke-width="0.5"><polygon points="56,130 58,128.4 62.6,128.8 61,130.6" fill="#dde6f0"/><polygon points="56,130 61,130.6 61,135 56,134.4" fill="#3a88d8"/><polygon points="61,130.6 62.6,128.8 62.6,133.2 61,135" fill="#9ab8d8"/></g><path d="M58.8 136.4l2-1 0.6 0.6 2-1.2" stroke="#d8a010" stroke-width="1" fill="none"/>
<text x="67.0" y="135.2" font-size="8.03" fill="#0c0c0c" textLength="41.5" lengthAdjust="spacingAndGlyphs">Fixed Support</text>
<text x="50.2" y="147.2" font-size="7.83" font-weight="bold" fill="#1a2a8a">?</text>
<rect x="55.2" y="139.2" width="8" height="7.2" fill="#f8e890" stroke="#6a5a18" stroke-width="0.7"/><rect x="55.2" y="138.4" width="8" height="1.6" fill="#5a4a18"/><rect x="57" y="141.6" width="2" height="3.2" fill="#30a040"/><rect x="59.2" y="141.6" width="2.2" height="3.2" fill="#e06020"/>
<text x="67.3" y="144.8" font-size="7.83" font-weight="bold" fill="#111" textLength="45.7" lengthAdjust="spacingAndGlyphs">Solution (A6)</text>
<path d="M69.4 148.6l-2.8 4h2l-1.8 3.4 3.8-4.6h-2z" fill="#e8c010"/>
<rect x="71.8" y="149.2" width="8" height="7.2" fill="#fbf3b0" stroke="#6a5a18" stroke-width="0.7"/><rect x="71.8" y="148.6" width="8" height="1.6" fill="#5a4a18"/><rect x="75" y="152" width="1.6" height="3" fill="#5a90e0"/>
<text x="83.7" y="155.0" font-size="8.03" fill="#0c0c0c" textLength="60.1" lengthAdjust="spacingAndGlyphs">Solution Information</text>
<rect x="0" y="320.5" width="256" height="217" fill="#f0f0f0"/>
<rect x="0.4" y="322.4" width="254.8" height="13" fill="#f3f3f5" stroke="#e2e2e8" stroke-width="0.8"/>
<text x="2.0" y="331.2" font-size="8.03" fill="#5a5a5a" textLength="90.5" lengthAdjust="spacingAndGlyphs">Details of &quot;Remote Point&quot;</text>
<rect x="96" y="326" width="116" height="5" fill="url(#dots)"/>
<polygon points="215.2,327.6 220.2,327.6 217.7,330.4" fill="#222"/>
<g transform="translate(224.9,325.7) scale(1.0)"><rect x="0.7" y="0" width="3.3" height="4.4" fill="#fff" stroke="#333" stroke-width="0.7"/><rect x="2.5" y="0" width="1.5" height="4.4" fill="#333"/><path d="M0 4.6h4.8" stroke="#333" stroke-width="0.8"/><path d="M2.3 4.6v2.7" stroke="#333" stroke-width="0.8"/></g>
<rect x="234.2" y="326" width="6.6" height="5.6" fill="none" stroke="#333" stroke-width="0.9"/><line x1="234.2" y1="326.8" x2="240.8" y2="326.8" stroke="#333" stroke-width="1.2"/>
<path d="M245.2 326l5 5.4M250.2 326l-5 5.4" stroke="#222" stroke-width="1.1"/>
<rect x="7.6" y="336.7" width="247.6" height="195.6" fill="#fff" stroke="#aeaeae" stroke-width="0.9"/>
<text x="10.0" y="344.9" font-size="7.83" font-weight="bold" fill="#111" textLength="20.0" lengthAdjust="spacingAndGlyphs">Scope</text>
<rect x="0.4" y="340.3" width="5" height="5" fill="#fff" stroke="#8a8a8a" stroke-width="0.7"/><line x1="1.6" y1="342.8" x2="4.2" y2="342.8" stroke="#333" stroke-width="0.8"/>
<line x1="7.6" y1="349.7" x2="255.2" y2="349.7" stroke="#b6b6b6" stroke-width="0.9"/>
<line x1="88.5" y1="349.7" x2="88.5" y2="362.8" stroke="#b6b6b6" stroke-width="0.9"/>
<text x="10.0" y="358.0" font-size="7.7" fill="#0c0c0c" textLength="54.4" lengthAdjust="spacingAndGlyphs">Scoping Method</text>
<text x="91.0" y="358.0" font-size="7.7" fill="#0c0c0c" textLength="63.1" lengthAdjust="spacingAndGlyphs">Geometry Selection</text>
<line x1="7.6" y1="362.8" x2="255.2" y2="362.8" stroke="#b6b6b6" stroke-width="0.9"/>
<line x1="88.5" y1="362.8" x2="88.5" y2="375.8" stroke="#b6b6b6" stroke-width="0.9"/>
<rect x="8" y="363.2" width="80.2" height="12.4" fill="#0a78d4"/>
<text x="10.2" y="371.0" font-size="7.7" fill="#fff" textLength="30.9" lengthAdjust="spacingAndGlyphs">Geometry</text>
<text x="91.0" y="371.0" font-size="7.7" fill="#0c0c0c" textLength="20.0" lengthAdjust="spacingAndGlyphs">1 Face</text>
<line x1="7.6" y1="375.8" x2="255.2" y2="375.8" stroke="#b6b6b6" stroke-width="0.9"/>
<line x1="88.5" y1="375.8" x2="88.5" y2="388.9" stroke="#b6b6b6" stroke-width="0.9"/>
<text x="10.0" y="384.1" font-size="7.7" fill="#0c0c0c" textLength="60.9" lengthAdjust="spacingAndGlyphs">Coordinate System</text>
<text x="91.0" y="384.1" font-size="7.7" fill="#0c0c0c" textLength="83.8" lengthAdjust="spacingAndGlyphs">Global Coordinate System</text>
<line x1="7.6" y1="388.9" x2="255.2" y2="388.9" stroke="#b6b6b6" stroke-width="0.9"/>
<line x1="88.5" y1="388.9" x2="88.5" y2="401.9" stroke="#b6b6b6" stroke-width="0.9"/>
<rect x="10.6" y="392.1" width="6.6" height="6.6" fill="#fff" stroke="#c8c8c8" stroke-width="0.8"/>
<text x="22.3" y="397.1" font-size="7.7" fill="#0c0c0c" textLength="42.4" lengthAdjust="spacingAndGlyphs">X Coordinate</text>
<text x="91.0" y="397.1" font-size="7.7" fill="#0c0c0c" textLength="19.6" lengthAdjust="spacingAndGlyphs">0. mm</text>
<line x1="7.6" y1="401.9" x2="255.2" y2="401.9" stroke="#b6b6b6" stroke-width="0.9"/>
<line x1="88.5" y1="401.9" x2="88.5" y2="414.9" stroke="#b6b6b6" stroke-width="0.9"/>
<rect x="10.6" y="405.1" width="6.6" height="6.6" fill="#fff" stroke="#c8c8c8" stroke-width="0.8"/>
<text x="22.3" y="410.1" font-size="7.7" fill="#0c0c0c" textLength="42.4" lengthAdjust="spacingAndGlyphs">Y Coordinate</text>
<text x="91.0" y="410.1" font-size="7.7" fill="#0c0c0c" textLength="19.6" lengthAdjust="spacingAndGlyphs">5. mm</text>
<line x1="7.6" y1="414.9" x2="255.2" y2="414.9" stroke="#b6b6b6" stroke-width="0.9"/>
<line x1="88.5" y1="414.9" x2="88.5" y2="428.0" stroke="#b6b6b6" stroke-width="0.9"/>
<rect x="10.6" y="418.1" width="6.6" height="6.6" fill="#fff" stroke="#c8c8c8" stroke-width="0.8"/>
<text x="22.3" y="423.2" font-size="7.7" fill="#0c0c0c" textLength="42.4" lengthAdjust="spacingAndGlyphs">Z Coordinate</text>
<text x="91.0" y="423.2" font-size="7.7" fill="#0c0c0c" textLength="27.1" lengthAdjust="spacingAndGlyphs">100. mm</text>
<line x1="7.6" y1="428.0" x2="255.2" y2="428.0" stroke="#b6b6b6" stroke-width="0.9"/>
<line x1="88.5" y1="428.0" x2="88.5" y2="441.0" stroke="#b6b6b6" stroke-width="0.9"/>
<text x="10.0" y="436.2" font-size="7.7" fill="#0c0c0c" textLength="28.3" lengthAdjust="spacingAndGlyphs">Location</text>
<text x="91.0" y="436.2" font-size="7.7" fill="#0c0c0c" textLength="50.8" lengthAdjust="spacingAndGlyphs">Click to Change</text>
<line x1="7.6" y1="441.0" x2="255.2" y2="441.0" stroke="#b6b6b6" stroke-width="0.9"/>
<text x="10.0" y="449.2" font-size="7.83" font-weight="bold" fill="#111" textLength="32.7" lengthAdjust="spacingAndGlyphs">Definition</text>
<rect x="0.4" y="444.6" width="5" height="5" fill="#fff" stroke="#8a8a8a" stroke-width="0.7"/><line x1="1.6" y1="447.1" x2="4.2" y2="447.1" stroke="#333" stroke-width="0.8"/>
<line x1="7.6" y1="454.1" x2="255.2" y2="454.1" stroke="#b6b6b6" stroke-width="0.9"/>
<line x1="88.5" y1="454.1" x2="88.5" y2="467.1" stroke="#b6b6b6" stroke-width="0.9"/>
<text x="10.0" y="462.3" font-size="7.7" fill="#0c0c0c" textLength="27.7" lengthAdjust="spacingAndGlyphs">ID (Beta)</text>
<text x="91.0" y="462.3" font-size="7.7" fill="#0c0c0c" textLength="6.3" lengthAdjust="spacingAndGlyphs">31</text>
<line x1="7.6" y1="467.1" x2="255.2" y2="467.1" stroke="#b6b6b6" stroke-width="0.9"/>
<line x1="88.5" y1="467.1" x2="88.5" y2="480.1" stroke="#b6b6b6" stroke-width="0.9"/>
<text x="10.0" y="475.3" font-size="7.7" fill="#0c0c0c" textLength="37.1" lengthAdjust="spacingAndGlyphs">Suppressed</text>
<text x="91.0" y="475.3" font-size="7.7" fill="#0c0c0c" textLength="9.1" lengthAdjust="spacingAndGlyphs">No</text>
<line x1="7.6" y1="480.1" x2="255.2" y2="480.1" stroke="#b6b6b6" stroke-width="0.9"/>
<line x1="88.5" y1="480.1" x2="88.5" y2="493.2" stroke="#b6b6b6" stroke-width="0.9"/>
<text x="10.0" y="488.4" font-size="7.7" fill="#0c0c0c" textLength="28.8" lengthAdjust="spacingAndGlyphs">Behavior</text>
<text x="91.0" y="488.4" font-size="7.7" fill="#0c0c0c" textLength="37.0" lengthAdjust="spacingAndGlyphs">Deformable</text>
<line x1="7.6" y1="493.2" x2="255.2" y2="493.2" stroke="#b6b6b6" stroke-width="0.9"/>
<line x1="88.5" y1="493.2" x2="88.5" y2="506.2" stroke="#b6b6b6" stroke-width="0.9"/>
<text x="10.0" y="501.4" font-size="7.7" fill="#0c0c0c" textLength="47.3" lengthAdjust="spacingAndGlyphs">Pinball Region</text>
<text x="91.0" y="501.4" font-size="7.7" fill="#0c0c0c" textLength="8.0" lengthAdjust="spacingAndGlyphs">All</text>
<line x1="7.6" y1="506.2" x2="255.2" y2="506.2" stroke="#b6b6b6" stroke-width="0.9"/>
<line x1="88.5" y1="506.2" x2="88.5" y2="519.3" stroke="#b6b6b6" stroke-width="0.9"/>
<text x="10.0" y="514.5" font-size="7.7" fill="#0c0c0c" textLength="45.8" lengthAdjust="spacingAndGlyphs">DOF Selection</text>
<text x="91.0" y="514.5" font-size="7.7" fill="#0c0c0c" textLength="63.7" lengthAdjust="spacingAndGlyphs">Program Controlled</text>
<line x1="7.6" y1="519.3" x2="255.2" y2="519.3" stroke="#b6b6b6" stroke-width="0.9"/>
<line x1="88.5" y1="519.3" x2="88.5" y2="532.3" stroke="#b6b6b6" stroke-width="0.9"/>
<text x="10.0" y="527.5" font-size="7.7" fill="#0c0c0c" textLength="75.7" lengthAdjust="spacingAndGlyphs">Pilot Node APDL Name</text>
<text x="91.0" y="527.5" font-size="7.7" fill="#0c0c0c" textLength="6.3" lengthAdjust="spacingAndGlyphs">rp</text>
<rect x="256" y="405" width="936" height="133" fill="#f0f0f0"/>
<line x1="258" y1="408.1" x2="1192" y2="408.1" stroke="#dcdce4" stroke-width="0.9"/>
<text x="261.0" y="417.1" font-size="8.03" fill="#5a5a5a" textLength="37.0" lengthAdjust="spacingAndGlyphs">Messages</text>
<rect x="301" y="413" width="858" height="5" fill="url(#dots)"/>
<polygon points="1161.8,413.6 1166.6,413.6 1164.2,416.3" fill="#222"/>
<g transform="translate(1171.9,411.4) scale(0.95)"><rect x="0.7" y="0" width="3.3" height="4.4" fill="#fff" stroke="#333" stroke-width="0.7"/><rect x="2.5" y="0" width="1.5" height="4.4" fill="#333"/><path d="M0 4.6h4.8" stroke="#333" stroke-width="0.8"/><path d="M2.3 4.6v2.7" stroke="#333" stroke-width="0.8"/></g>
<path d="M1182 412.2l5.2 5M1187.2 412.2l-5.2 5" stroke="#222" stroke-width="1.1"/>
<rect x="258.2" y="421.9" width="933.8" height="117" fill="#a0a0a0"/>
<rect x="258.2" y="421.9" width="646" height="10.6" fill="#f2f2f2"/>
<line x1="288.6" y1="421.9" x2="288.6" y2="432.5" stroke="#b8b8b8" stroke-width="0.9"/>
<line x1="577.6" y1="421.9" x2="577.6" y2="432.5" stroke="#b8b8b8" stroke-width="0.9"/>
<line x1="767" y1="421.9" x2="767" y2="432.5" stroke="#b8b8b8" stroke-width="0.9"/>
<line x1="904.2" y1="421.9" x2="904.2" y2="432.5" stroke="#b8b8b8" stroke-width="0.9"/>
<text x="291.4" y="430.1" font-size="7.48" fill="#0c0c0c" textLength="13.0" lengthAdjust="spacingAndGlyphs">Text</text>
<text x="580.4" y="430.1" font-size="7.48" fill="#0c0c0c" textLength="38.0" lengthAdjust="spacingAndGlyphs">Association</text>
<text x="769.8" y="430.1" font-size="7.48" fill="#0c0c0c" textLength="35.6" lengthAdjust="spacingAndGlyphs">Timestamp</text>
<rect x="256" y="13" width="2" height="525" fill="#f0f0f0"/>
<rect x="0" y="536.6" width="1192" height="1.4" fill="#2f80bc"/><rect x="0" y="536" width="1192" height="0.7" fill="#9cb8d0" fill-opacity="0.7"/>
</svg>
</body></html>
